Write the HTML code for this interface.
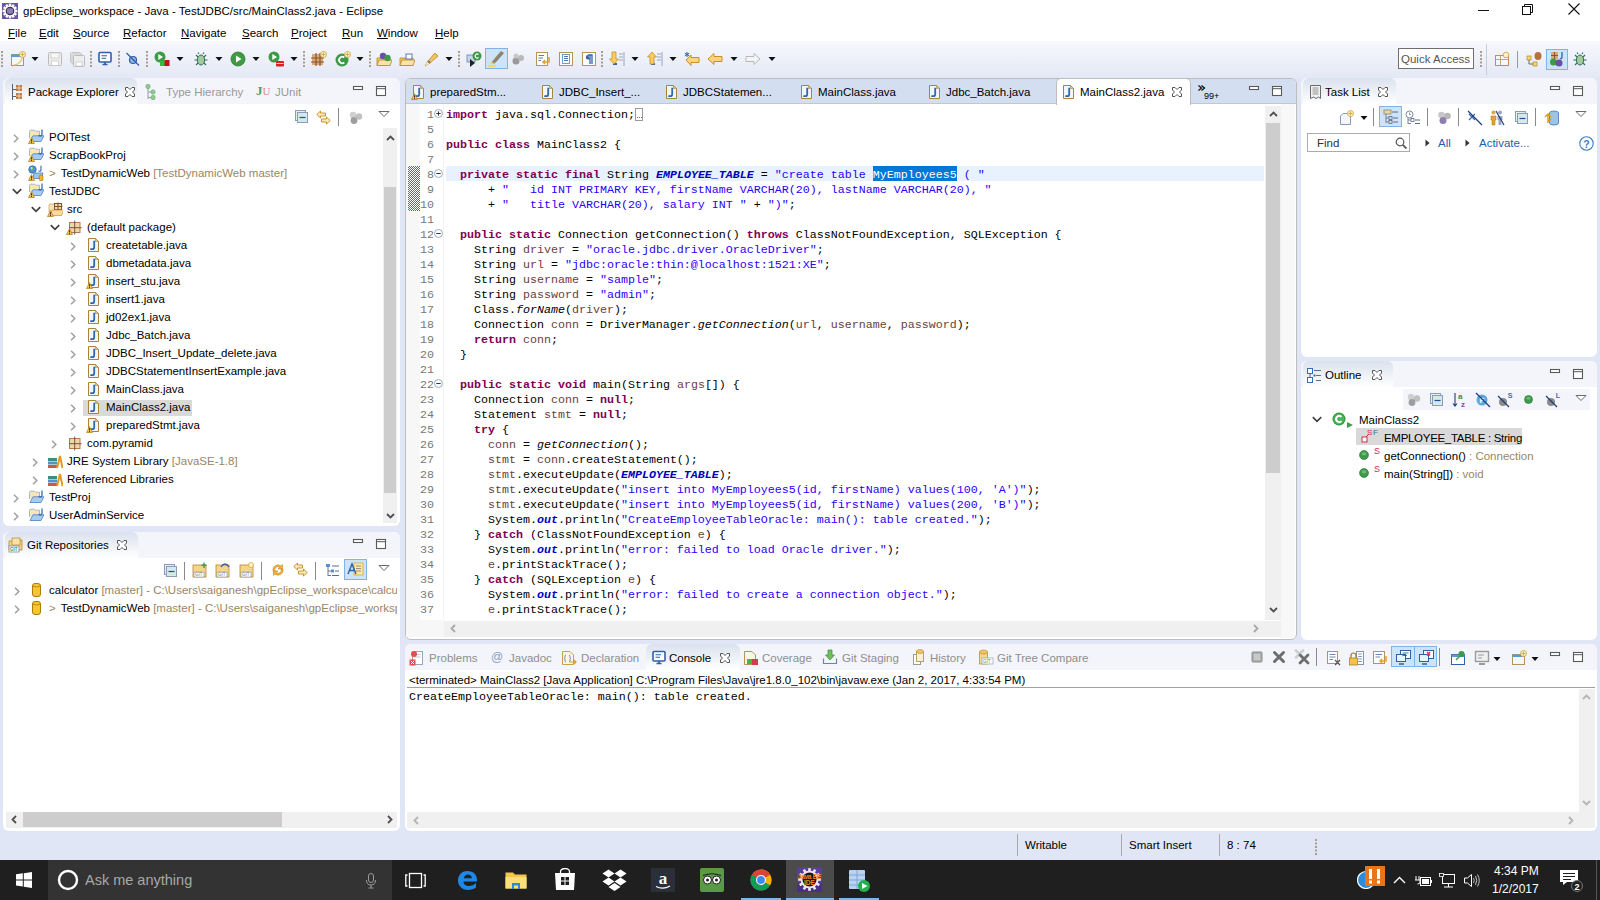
<!DOCTYPE html><html><head><meta charset="utf-8"><style>
*{box-sizing:border-box}
body{margin:0;width:1600px;height:900px;position:relative;overflow:hidden;background:#E1E6F6;font-family:"Liberation Sans",sans-serif;font-size:11.5px;color:#000}
.a{position:absolute}
.t{position:absolute;white-space:nowrap;line-height:14px}
.panel{position:absolute;background:#fff;border-radius:6px;overflow:hidden}
.hdr{position:absolute;left:0;right:0;top:0;height:26px;background:#F3F5FB}
.code{position:absolute;font-family:"Liberation Mono",monospace;font-size:11.67px;white-space:pre;line-height:15px;height:15px}
.k{color:#7F0055;font-weight:bold}
.s{color:#2A00FF}
.v{color:#6A3E3E}
.f{color:#0000C0;font-style:italic;font-weight:bold}
.i{font-style:italic}
.dec{color:#9A8662}
.g{color:#8A8A8A}
</style></head><body>
<div class="a" style="left:0;top:0;width:1600px;height:41px;background:#fff"></div>
<svg class="a" style="left:2px;top:3px" width="16" height="16" viewBox="0 0 16 16"><rect x="0" y="0" width="16" height="16" fill="#6B55A3"/><rect x="6.8" y="0.6" width="2.4" height="3" fill="#fff" transform="rotate(0 8 8)"/><rect x="6.8" y="0.6" width="2.4" height="3" fill="#fff" transform="rotate(30 8 8)"/><rect x="6.8" y="0.6" width="2.4" height="3" fill="#fff" transform="rotate(60 8 8)"/><rect x="6.8" y="0.6" width="2.4" height="3" fill="#fff" transform="rotate(90 8 8)"/><rect x="6.8" y="0.6" width="2.4" height="3" fill="#fff" transform="rotate(120 8 8)"/><rect x="6.8" y="0.6" width="2.4" height="3" fill="#fff" transform="rotate(150 8 8)"/><rect x="6.8" y="0.6" width="2.4" height="3" fill="#fff" transform="rotate(180 8 8)"/><rect x="6.8" y="0.6" width="2.4" height="3" fill="#fff" transform="rotate(210 8 8)"/><rect x="6.8" y="0.6" width="2.4" height="3" fill="#fff" transform="rotate(240 8 8)"/><rect x="6.8" y="0.6" width="2.4" height="3" fill="#fff" transform="rotate(270 8 8)"/><rect x="6.8" y="0.6" width="2.4" height="3" fill="#fff" transform="rotate(300 8 8)"/><rect x="6.8" y="0.6" width="2.4" height="3" fill="#fff" transform="rotate(330 8 8)"/><circle cx="8" cy="8" r="5.6" fill="#fff"/><circle cx="8" cy="8" r="4.3" fill="#1E1A30"/><circle cx="8" cy="8" r="3.4" fill="#7566A6"/><path d="M4.8 7 H11.2 M4.8 9 H11.2" stroke="#B9AEDD" stroke-width="0.7"/></svg>
<div class="t" style="left:23px;top:4px;">gpEclipse_workspace - Java - TestJDBC/src/MainClass2.java - Eclipse</div>
<div class="t" style="left:8px;top:26px;"><u>F</u>ile</div>
<div class="t" style="left:39px;top:26px;"><u>E</u>dit</div>
<div class="t" style="left:73px;top:26px;"><u>S</u>ource</div>
<div class="t" style="left:123px;top:26px;"><u>R</u>efactor</div>
<div class="t" style="left:181px;top:26px;"><u>N</u>avigate</div>
<div class="t" style="left:242px;top:26px;"><u>S</u>earch</div>
<div class="t" style="left:291px;top:26px;"><u>P</u>roject</div>
<div class="t" style="left:342px;top:26px;"><u>R</u>un</div>
<div class="t" style="left:377px;top:26px;"><u>W</u>indow</div>
<div class="t" style="left:435px;top:26px;"><u>H</u>elp</div>
<svg class="a" style="left:1478px;top:4px" width="12" height="12" viewBox="0 0 12 12"><path d="M0 6.5 H11" stroke="#111" stroke-width="1"/></svg>
<svg class="a" style="left:1522px;top:4px" width="12" height="12" viewBox="0 0 12 12"><rect x="0.5" y="2.5" width="8" height="8" fill="none" stroke="#111"/><path d="M2.5 2.5 V0.5 H10.5 V8.5 H8.5" fill="none" stroke="#111"/></svg>
<svg class="a" style="left:1568px;top:3px" width="12" height="12" viewBox="0 0 12 12"><path d="M0.5 0.5 L11.5 11.5 M11.5 0.5 L0.5 11.5" stroke="#111" stroke-width="1.1"/></svg>
<div class="a" style="left:0;top:41px;width:1600px;height:37px;background:linear-gradient(#F7F8FC,#E4E8F6)"></div>
<svg class="a" style="left:0px;top:50px" width="4" height="19" viewBox="0 0 4 19"><g fill="#A79F8A"><rect x="1" y="1.0" width="2" height="2"/><rect x="1" y="4.5" width="2" height="2"/><rect x="1" y="8.0" width="2" height="2"/><rect x="1" y="11.5" width="2" height="2"/><rect x="1" y="15.0" width="2" height="2"/></g></svg>
<svg class="a" style="left:10px;top:51px" width="16" height="16" viewBox="0 0 16 16"><rect x="1.5" y="3.5" width="12" height="11" fill="#F4F8FC" stroke="#B49459"/><rect x="1.5" y="3.5" width="12" height="2.5" fill="#5B9BD5"/><path d="M4 14 Q11 13 12 7" stroke="#E8C97A" stroke-width="1.5" fill="none"/><circle cx="12.5" cy="3.5" r="3" fill="#FFF3C4" stroke="#C8A040" stroke-width="0.8"/><path d="M12.5 1.5 V5.5 M10.5 3.5 H14.5" stroke="#C8A040" stroke-width="0.8"/></svg>
<svg class="a" style="left:31px;top:56px" width="8" height="6" viewBox="0 0 8 6"><path d="M0.5 1 H7.5 L4 5 Z" fill="#111"/></svg>
<svg class="a" style="left:47px;top:51px" width="16" height="16" viewBox="0 0 16 16"><rect x="1.5" y="1.5" width="13" height="13" rx="1" fill="#EDEDED" stroke="#BDBDBD"/><rect x="4" y="2" width="8" height="5" fill="#F8F8F8" stroke="#C8C8C8" stroke-width="0.7"/><rect x="4.5" y="10" width="7" height="4.5" fill="#fff" stroke="#C4C4C4" stroke-width="0.7"/></svg>
<svg class="a" style="left:69px;top:51px" width="16" height="16" viewBox="0 0 16 16"><rect x="1.5" y="1.5" width="10" height="10" rx="1" fill="#EDEDED" stroke="#C4C4C4"/><rect x="3" y="3" width="10" height="10" rx="1" fill="#EDEDED" stroke="#C4C4C4"/><rect x="4.5" y="4.5" width="11" height="11" rx="1" fill="#EDEDED" stroke="#BDBDBD"/><rect x="7" y="11" width="6" height="4" fill="#fff" stroke="#C4C4C4" stroke-width="0.7"/></svg>
<svg class="a" style="left:89px;top:50px" width="4" height="19" viewBox="0 0 4 19"><g fill="#A79F8A"><rect x="1" y="1.0" width="2" height="2"/><rect x="1" y="4.5" width="2" height="2"/><rect x="1" y="8.0" width="2" height="2"/><rect x="1" y="11.5" width="2" height="2"/><rect x="1" y="15.0" width="2" height="2"/></g></svg>
<svg class="a" style="left:98px;top:51px" width="16" height="16" viewBox="0 0 16 16"><rect x="1" y="1.5" width="12" height="9.5" rx="1" fill="#fff" stroke="#2F5FA8" stroke-width="1.6"/><path d="M3.5 4.8 H9 M3.5 7.3 H8" stroke="#2F5FA8" stroke-width="1.1"/><path d="M4.5 13.5 H9.5 M7 11 V13.5" stroke="#2F5FA8" stroke-width="1.6"/></svg>
<svg class="a" style="left:117px;top:50px" width="4" height="19" viewBox="0 0 4 19"><g fill="#A79F8A"><rect x="1" y="1.0" width="2" height="2"/><rect x="1" y="4.5" width="2" height="2"/><rect x="1" y="8.0" width="2" height="2"/><rect x="1" y="11.5" width="2" height="2"/><rect x="1" y="15.0" width="2" height="2"/></g></svg>
<svg class="a" style="left:125px;top:51px" width="16" height="16" viewBox="0 0 16 16"><circle cx="8" cy="9" r="3.5" fill="#8FB4E0" stroke="#2F5FA8" stroke-width="1.2"/><path d="M1.5 2 L14 14.5" stroke="#2F5FA8" stroke-width="1.2"/></svg>
<svg class="a" style="left:145px;top:50px" width="4" height="19" viewBox="0 0 4 19"><g fill="#A79F8A"><rect x="1" y="1.0" width="2" height="2"/><rect x="1" y="4.5" width="2" height="2"/><rect x="1" y="8.0" width="2" height="2"/><rect x="1" y="11.5" width="2" height="2"/><rect x="1" y="15.0" width="2" height="2"/></g></svg>
<svg class="a" style="left:154px;top:51px" width="16" height="16" viewBox="0 0 16 16"><circle cx="6" cy="6" r="5.5" fill="#3E9B45"/><path d="M4.3 3 L9 6 L4.3 9 Z" fill="#fff"/><rect x="6" y="10" width="5" height="5" fill="#2FBF3A"/><rect x="10.5" y="9" width="5" height="6" fill="#B81818"/></svg>
<svg class="a" style="left:176px;top:56px" width="8" height="6" viewBox="0 0 8 6"><path d="M0.5 1 H7.5 L4 5 Z" fill="#111"/></svg>
<svg class="a" style="left:193px;top:51px" width="16" height="16" viewBox="0 0 16 16"><g stroke="#2A6E5E" stroke-width="1.1" fill="none"><path d="M3 4 L5 6 M13 4 L11 6 M1.5 9 H4 M12 9 H14.5 M3 14 L5 12 M13 14 L11 12 M6 3 L5 1.5 M10 3 L11 1.5"/></g><ellipse cx="8" cy="9" rx="3.6" ry="5" fill="#A5C99A" stroke="#2A6E5E" stroke-width="1"/></svg>
<svg class="a" style="left:215px;top:56px" width="8" height="6" viewBox="0 0 8 6"><path d="M0.5 1 H7.5 L4 5 Z" fill="#111"/></svg>
<svg class="a" style="left:230px;top:51px" width="16" height="16" viewBox="0 0 16 16"><circle cx="8" cy="8" r="7" fill="#3E9B45" stroke="#2B7A33" stroke-width="0.8"/><path d="M6 4.5 L11.5 8 L6 11.5 Z" fill="#fff"/></svg>
<svg class="a" style="left:252px;top:56px" width="8" height="6" viewBox="0 0 8 6"><path d="M0.5 1 H7.5 L4 5 Z" fill="#111"/></svg>
<svg class="a" style="left:268px;top:51px" width="16" height="16" viewBox="0 0 16 16"><circle cx="6" cy="6" r="5.5" fill="#3E9B45"/><path d="M4.3 3 L9 6 L4.3 9 Z" fill="#fff"/><rect x="8" y="10" width="8" height="5.5" rx="1" fill="#D62222"/><path d="M8.5 12.5 H15.5" stroke="#fff" stroke-width="0.8"/></svg>
<svg class="a" style="left:290px;top:56px" width="8" height="6" viewBox="0 0 8 6"><path d="M0.5 1 H7.5 L4 5 Z" fill="#111"/></svg>
<svg class="a" style="left:302px;top:50px" width="4" height="19" viewBox="0 0 4 19"><g fill="#A79F8A"><rect x="1" y="1.0" width="2" height="2"/><rect x="1" y="4.5" width="2" height="2"/><rect x="1" y="8.0" width="2" height="2"/><rect x="1" y="11.5" width="2" height="2"/><rect x="1" y="15.0" width="2" height="2"/></g></svg>
<svg class="a" style="left:311px;top:51px" width="16" height="16" viewBox="0 0 16 16"><rect x="1" y="3" width="11" height="11" fill="#D9A878"/><g stroke="#8A5428" stroke-width="1.2"><path d="M5 2 V15 M9 2 V15 M0 7 H13 M0 11 H13"/></g><circle cx="12.5" cy="3.5" r="3" fill="#FFF3C4" stroke="#C8A040" stroke-width="0.8"/><path d="M12.5 1.5 V5.5 M10.5 3.5 H14.5" stroke="#C8A040" stroke-width="0.8"/></svg>
<svg class="a" style="left:335px;top:51px" width="16" height="16" viewBox="0 0 16 16"><circle cx="7" cy="9" r="6.5" fill="#3B9947"/><path d="M9.3 6.5 A3.2 3.2 0 1 0 9.3 11.5" stroke="#fff" stroke-width="1.8" fill="none"/><circle cx="12.5" cy="3.5" r="3" fill="#FFF3C4" stroke="#C8A040" stroke-width="0.8"/><path d="M12.5 1.5 V5.5 M10.5 3.5 H14.5" stroke="#C8A040" stroke-width="0.8"/></svg>
<svg class="a" style="left:356px;top:56px" width="8" height="6" viewBox="0 0 8 6"><path d="M0.5 1 H7.5 L4 5 Z" fill="#111"/></svg>
<svg class="a" style="left:368px;top:50px" width="4" height="19" viewBox="0 0 4 19"><g fill="#A79F8A"><rect x="1" y="1.0" width="2" height="2"/><rect x="1" y="4.5" width="2" height="2"/><rect x="1" y="8.0" width="2" height="2"/><rect x="1" y="11.5" width="2" height="2"/><rect x="1" y="15.0" width="2" height="2"/></g></svg>
<svg class="a" style="left:376px;top:51px" width="16" height="16" viewBox="0 0 16 16"><path d="M1 7 H14 V14.5 H1 Z" fill="#F0C674" stroke="#B8862E" stroke-width="0.8"/><path d="M1 14.5 L3 9 H16 L14 14.5 Z" fill="#FBE3A6" stroke="#B8862E" stroke-width="0.8"/><circle cx="7" cy="5" r="3.2" fill="#6A4FA8"/><circle cx="11.5" cy="7" r="3.2" fill="#3C9A48"/></svg>
<svg class="a" style="left:399px;top:51px" width="16" height="16" viewBox="0 0 16 16"><path d="M1 7 H14 V14.5 H1 Z" fill="#F0C674" stroke="#B8862E" stroke-width="0.8"/><path d="M1 14.5 L3 9 H16 L14 14.5 Z" fill="#FBE3A6" stroke="#B8862E" stroke-width="0.8"/><rect x="7" y="3" width="6" height="5" fill="#fff" stroke="#5A7FB0" stroke-width="1"/></svg>
<svg class="a" style="left:423px;top:51px" width="16" height="16" viewBox="0 0 16 16"><path d="M2 15 L5 10 L12 2 L15 5 L7 12 Z" fill="#F2C45A" stroke="#B8862E" stroke-width="0.8"/><path d="M2 15 L5 10 L7 12 Z" fill="#FFF6B0"/><path d="M5 10 L7 12" stroke="#777" stroke-width="2"/></svg>
<svg class="a" style="left:445px;top:56px" width="8" height="6" viewBox="0 0 8 6"><path d="M0.5 1 H7.5 L4 5 Z" fill="#111"/></svg>
<svg class="a" style="left:457px;top:50px" width="4" height="19" viewBox="0 0 4 19"><g fill="#A79F8A"><rect x="1" y="1.0" width="2" height="2"/><rect x="1" y="4.5" width="2" height="2"/><rect x="1" y="8.0" width="2" height="2"/><rect x="1" y="11.5" width="2" height="2"/><rect x="1" y="15.0" width="2" height="2"/></g></svg>
<svg class="a" style="left:466px;top:51px" width="16" height="16" viewBox="0 0 16 16"><rect x="1" y="4" width="8" height="7" fill="#C5D4E8" stroke="#6A86AE" stroke-width="0.8"/><circle cx="11" cy="5" r="4.5" fill="#3B9947"/><path d="M12.5 3.5 A2 2 0 1 0 12.5 6.5" stroke="#fff" stroke-width="1.2" fill="none"/><path d="M4 8 L4 16 L9 12 Z" fill="#222"/></svg>
<div class="a" style="left:485px;top:48px;width:23px;height:21px;background:#CDE3F8;border:1px solid #7EB4EA"></div>
<svg class="a" style="left:488px;top:50px" width="17" height="17" viewBox="0 0 17 17"><path d="M3 13 L7 8 L13 1 L16 3 L10 10 L6 14 Z" fill="#8D8370"/><path d="M2 15 L3 12 L7 13 Z" fill="#F5D54B"/><path d="M0 16 H8" stroke="#F5D54B" stroke-width="1.5"/></svg>
<svg class="a" style="left:511px;top:51px" width="16" height="16" viewBox="0 0 16 16"><circle cx="5" cy="10" r="3.5" fill="#9A9A9A"/><circle cx="10" cy="7" r="3" fill="#B8B8B8"/><circle cx="5" cy="5" r="2.5" fill="#C8C8C8"/></svg>
<svg class="a" style="left:535px;top:51px" width="16" height="16" viewBox="0 0 16 16"><rect x="1.5" y="1.5" width="11" height="13" fill="#fff" stroke="#B49459"/><path d="M3.5 4.5 H9 M3.5 7 H8 M3.5 9.5 H6" stroke="#5A7FB0"/><path d="M14 6 V11 H8 M10 9 L8 11 L10 13" stroke="#E2A42A" stroke-width="1.6" fill="none"/></svg>
<svg class="a" style="left:558px;top:51px" width="16" height="16" viewBox="0 0 16 16"><rect x="1.5" y="1.5" width="13" height="13" fill="#fff" stroke="#B49459"/><rect x="4.5" y="3.5" width="7" height="9" fill="#fff" stroke="#5A7FB0" stroke-width="0.8"/><path d="M6 5.5 H10 M6 7.5 H10 M6 9.5 H10" stroke="#3463A9" stroke-width="0.9"/></svg>
<svg class="a" style="left:581px;top:51px" width="16" height="16" viewBox="0 0 16 16"><rect x="1.5" y="1.5" width="13" height="13" fill="#fff" stroke="#B49459"/><path d="M7 4 H11 V13 M9 4 V13" stroke="#3463A9" stroke-width="1.3" fill="none"/><path d="M7 4 A2.2 2.2 0 0 0 7 8.4 H9" fill="#3463A9"/></svg>
<svg class="a" style="left:600px;top:50px" width="4" height="19" viewBox="0 0 4 19"><g fill="#A79F8A"><rect x="1" y="1.0" width="2" height="2"/><rect x="1" y="4.5" width="2" height="2"/><rect x="1" y="8.0" width="2" height="2"/><rect x="1" y="11.5" width="2" height="2"/><rect x="1" y="15.0" width="2" height="2"/></g></svg>
<svg class="a" style="left:609px;top:51px" width="16" height="16" viewBox="0 0 16 16"><g stroke="#7E97B8" stroke-width="0.8"><path d="M10 3 H14 M10 6 H14 M10 9 H14 M15 1 V15"/></g><rect x="4" y="12" width="4" height="2" fill="#3463A9"/><path d="M5 13 L9.5 8 H7 V1 H3 V8 H0.5 Z" fill="#F8CF5E" stroke="#C8902A" stroke-width="0.8"/></svg>
<svg class="a" style="left:631px;top:56px" width="8" height="6" viewBox="0 0 8 6"><path d="M0.5 1 H7.5 L4 5 Z" fill="#111"/></svg>
<svg class="a" style="left:647px;top:51px" width="16" height="16" viewBox="0 0 16 16"><g stroke="#7E97B8" stroke-width="0.8"><path d="M10 3 H14 M10 6 H14 M10 9 H14 M15 1 V15"/></g><rect x="4" y="12" width="4" height="2" fill="#3463A9"/><path d="M5 1 L9.5 6 H7 V13 H3 V6 H0.5 Z" fill="#F8CF5E" stroke="#C8902A" stroke-width="0.8"/></svg>
<svg class="a" style="left:669px;top:56px" width="8" height="6" viewBox="0 0 8 6"><path d="M0.5 1 H7.5 L4 5 Z" fill="#111"/></svg>
<svg class="a" style="left:684px;top:51px" width="16" height="16" viewBox="0 0 16 16"><path d="M3 1 V6 M0.8 2.2 L5.2 4.8 M0.8 4.8 L5.2 2.2" stroke="#2F5FA8" stroke-width="1"/><path d="M2 9 L7 4 V6.5 H15 V11.5 H7 V14.5 Z" fill="#F8D57A" stroke="#C8902A" stroke-width="1"/></svg>
<svg class="a" style="left:707px;top:51px" width="16" height="16" viewBox="0 0 16 16"><path d="M1 8 L7 2.5 V5.5 H15 V10.5 H7 V13.5 Z" fill="#F8D57A" stroke="#C8902A" stroke-width="1"/></svg>
<svg class="a" style="left:730px;top:56px" width="8" height="6" viewBox="0 0 8 6"><path d="M0.5 1 H7.5 L4 5 Z" fill="#111"/></svg>
<svg class="a" style="left:745px;top:51px" width="16" height="16" viewBox="0 0 16 16"><path d="M15 8 L9 2.5 V5.5 H1 V10.5 H9 V13.5 Z" fill="#F4F4F4" stroke="#B8B8B8" stroke-width="1"/></svg>
<svg class="a" style="left:768px;top:56px" width="8" height="6" viewBox="0 0 8 6"><path d="M0.5 1 H7.5 L4 5 Z" fill="#111"/></svg>
<div class="a" style="left:1398px;top:48px;width:76px;height:21px;border:1px solid #6E6E6E;background:#fff"></div>
<div class="t" style="left:1401px;top:52px;color:#555">Quick Access</div>
<svg class="a" style="left:1479px;top:50px" width="4" height="19" viewBox="0 0 4 19"><g fill="#A79F8A"><rect x="1" y="1.0" width="2" height="2"/><rect x="1" y="4.5" width="2" height="2"/><rect x="1" y="8.0" width="2" height="2"/><rect x="1" y="11.5" width="2" height="2"/><rect x="1" y="15.0" width="2" height="2"/></g></svg>
<div class="a" style="left:1486px;top:44px;width:1px;height:31px;background:#C8CCD8"></div>
<svg class="a" style="left:1494px;top:51px" width="16" height="16" viewBox="0 0 16 16"><rect x="1.5" y="4.5" width="13" height="10" fill="#F4F8FC" stroke="#B49459"/><path d="M1.5 8.5 H14.5 M6.5 4.5 V14.5" stroke="#B49459" stroke-width="0.8"/><circle cx="12" cy="4" r="2.8" fill="#FFF3C4" stroke="#C8A040" stroke-width="0.8"/></svg>
<div class="a" style="left:1517px;top:51px;width:1px;height:17px;background:#9A9A9A"></div>
<svg class="a" style="left:1526px;top:51px" width="16" height="16" viewBox="0 0 16 16"><rect x="1" y="5" width="4" height="4" fill="#F5D56A" stroke="#B8862E" stroke-width="0.7"/><rect x="7" y="11" width="4" height="4" fill="#F5D56A" stroke="#B8862E" stroke-width="0.7"/><path d="M3 9 V13 H7" stroke="#666" fill="none"/><ellipse cx="12" cy="5" rx="3.5" ry="4" fill="#B8713A"/></svg>
<div class="a" style="left:1546px;top:49px;width:22px;height:21px;background:#CDE3F8;border:1px solid #7EB4EA"></div>
<svg class="a" style="left:1549px;top:51px" width="16" height="16" viewBox="0 0 16 16"><rect x="2" y="1" width="7" height="7" fill="#D9A878"/><path d="M5.5 1 V8 M2 4.5 H9" stroke="#8A5428"/><circle cx="4.5" cy="11" r="3.5" fill="#3C9A48"/><circle cx="10" cy="12" r="3.5" fill="#6A4FA8"/><path d="M13 1 V6 Q13 8 11 7.5" stroke="#3463A9" stroke-width="1.3" fill="none"/></svg>
<svg class="a" style="left:1572px;top:51px" width="16" height="16" viewBox="0 0 16 16"><g stroke="#2A6E5E" stroke-width="1.1" fill="none"><path d="M3 4 L5 6 M13 4 L11 6 M1.5 9 H4 M12 9 H14.5 M3 14 L5 12 M13 14 L11 12 M6 3 L5 1.5 M10 3 L11 1.5"/></g><ellipse cx="8" cy="9" rx="3.6" ry="5" fill="#A5C99A" stroke="#2A6E5E" stroke-width="1"/></svg>
<div class="panel" style="left:3px;top:78px;width:397px;height:448px">
<div class="hdr"></div>
<div class="a" style="left:2px;top:0;width:132px;height:26px;border-radius:6px 6px 0 0;background:linear-gradient(#DAE2ED,#fff)"></div>
</div>
<svg class="a" style="left:11px;top:84px" width="16" height="16" viewBox="0 0 16 16"><path d="M1.5 0 V16 M1.5 5.5 H5 M1.5 12.5 H5" stroke="#56607A" stroke-width="1"/><g fill="#C07A43"><rect x="5" y="1" width="6" height="6"/><rect x="5" y="9" width="6" height="6"/></g><g stroke="#F3E2CF" stroke-width="0.8"><path d="M8 1 V7 M5 4 H11 M8 9 V15 M5 12 H11"/></g></svg>
<div class="t" style="left:28px;top:85px;">Package Explorer</div>
<svg class="a" style="left:145px;top:84px" width="16" height="16" viewBox="0 0 16 16"><path d="M3 3 V15 M3 8 H7 M3 13.5 H7" stroke="#9A9AAE" stroke-width="1"/><g fill="#8FCB8F" stroke="#6BAA6B" stroke-width="0.6"><circle cx="3" cy="2.5" r="2.2"/><circle cx="8" cy="8" r="2.2"/><circle cx="8" cy="13.5" r="2.2"/></g></svg>
<div class="t" style="left:256px;top:84px;font-family:Liberation Serif;font-size:13px;font-weight:bold;color:#4E9E5E">J<span style="color:#E08A8A;font-size:11px;font-weight:normal">U</span></div>
<svg class="a" style="left:295px;top:110px" width="14" height="14" viewBox="0 0 14 14"><rect x="0.5" y="0.5" width="10" height="10" fill="#E3EEF3" stroke="#8E9BB5"/><rect x="2.5" y="2.5" width="10" height="10" fill="#D5E9EC" stroke="#8E9BB5"/><path d="M4.5 7.5 H10.5" stroke="#1F4F9A" stroke-width="1.2"/></svg>
<svg class="a" style="left:316px;top:110px" width="15" height="15" viewBox="0 0 15 15"><path d="M0.8 4.5 L4.5 1 V3 H9.5 V6 H4.5 V8 Z" fill="#FCEBB8" stroke="#C48A22" stroke-width="0.9"/><path d="M14.2 10.5 L10.5 7 V9 H5.5 V12 H10.5 V14 Z" fill="#FCEBB8" stroke="#C48A22" stroke-width="0.9"/></svg>
<div class="a" style="left:338px;top:108px;width:1px;height:18px;background:#8A8A8A"></div>
<svg class="a" style="left:349px;top:111px" width="14" height="14" viewBox="0 0 14 14"><circle cx="4" cy="4" r="3.2" fill="#CFCFCF"/><circle cx="10" cy="5.5" r="3.2" fill="#C0C0C0"/><circle cx="5" cy="9.5" r="3.4" fill="#9E9E9E"/></svg>
<svg class="a" style="left:378px;top:109px" width="12" height="9" viewBox="0 0 12 9"><path d="M1 2.5 H11 L6 7.5 Z" fill="#fff" stroke="#6A6A6A" stroke-width="1"/></svg>
<svg class="a" style="left:125px;top:87px" width="10" height="10" viewBox="0 0 10 10"><path d="M0.5 0.5 H3 L5 2.5 L7 0.5 H9.5 V3 L7.5 5 L9.5 7 V9.5 H7 L5 7.5 L3 9.5 H0.5 V7 L2.5 5 L0.5 3 Z" fill="#fff" stroke="#555" stroke-width="1"/></svg>
<div class="t" style="left:166px;top:85px;color:#999">Type Hierarchy</div>
<div class="t" style="left:275px;top:85px;color:#999">JUnit</div>
<svg class="a" style="left:352px;top:85px" width="12" height="12" viewBox="0 0 12 12"><rect x="1.5" y="1.5" width="9" height="3" fill="#fff" stroke="#5A5A5A" stroke-width="1.1"/></svg><svg class="a" style="left:375px;top:85px" width="13" height="13" viewBox="0 0 13 13"><rect x="1.5" y="1.5" width="9" height="9" fill="#fff" stroke="#5A5A5A" stroke-width="1.1"/><path d="M1.5 3.7 H10.5" stroke="#5A5A5A" stroke-width="1"/></svg>
<svg class="a" style="left:12px;top:133px" width="8" height="11" viewBox="0 0 8 11"><path d="M2 1.8 L5.8 5.5 L2 9.2" fill="none" stroke="#A3A3A3" stroke-width="1.6"/></svg>
<svg class="a" style="left:28px;top:129px" width="16" height="16" viewBox="0 0 16 16"><path d="M1.5 9 V2.5 Q1.5 1.2 2.8 1.2 H6.5 L7.5 2.2 H11.5 V9" fill="#F8E6B8" stroke="#9FB0C8" stroke-width="0.9"/><path d="M2 12.5 L5 6.8 H16 L13 12.5 Z" fill="#A8CBF0" stroke="#5A8AC8" stroke-width="0.9"/><path d="M14 0.5 V5 Q14 7 12 7 Q11 7 10.6 6" fill="none" stroke="#3A6FB0" stroke-width="1.3"/><path d="M0.5 14.5 L3.5 8.5 L6.5 14.5 Z" fill="#F4C24B" stroke="#B8862E" stroke-width="0.8"/><rect x="3.1" y="10.3" width="0.9" height="2.2" fill="#222"/><rect x="3.1" y="13" width="0.9" height="0.9" fill="#222"/></svg>
<div class="t" style="left:49px;top:130px;">POITest</div>
<svg class="a" style="left:12px;top:151px" width="8" height="11" viewBox="0 0 8 11"><path d="M2 1.8 L5.8 5.5 L2 9.2" fill="none" stroke="#A3A3A3" stroke-width="1.6"/></svg>
<svg class="a" style="left:28px;top:147px" width="16" height="16" viewBox="0 0 16 16"><path d="M1.5 9 V2.5 Q1.5 1.2 2.8 1.2 H6.5 L7.5 2.2 H11.5 V9" fill="#F8E6B8" stroke="#9FB0C8" stroke-width="0.9"/><path d="M2 12.5 L5 6.8 H16 L13 12.5 Z" fill="#A8CBF0" stroke="#5A8AC8" stroke-width="0.9"/><path d="M14 0.5 V5 Q14 7 12 7 Q11 7 10.6 6" fill="none" stroke="#3A6FB0" stroke-width="1.3"/><path d="M0.5 14.5 L3.5 8.5 L6.5 14.5 Z" fill="#F4C24B" stroke="#B8862E" stroke-width="0.8"/><rect x="3.1" y="10.3" width="0.9" height="2.2" fill="#222"/><rect x="3.1" y="13" width="0.9" height="0.9" fill="#222"/></svg>
<div class="t" style="left:49px;top:148px;">ScrapBookProj</div>
<svg class="a" style="left:12px;top:169px" width="8" height="11" viewBox="0 0 8 11"><path d="M2 1.8 L5.8 5.5 L2 9.2" fill="none" stroke="#A3A3A3" stroke-width="1.6"/></svg>
<svg class="a" style="left:28px;top:165px" width="16" height="16" viewBox="0 0 16 16"><circle cx="4.5" cy="4.5" r="3.8" fill="#4A90D9" stroke="#2F5F9E" stroke-width="0.6"/><path d="M3 2.5 Q5 2 5.5 4 Q4.5 6 3 5 Z" fill="#7DBF4A"/><circle cx="3.5" cy="3" r="1" fill="#E8F4FF" opacity="0.7"/><path d="M6 8 H15 L13.5 13.5 H5 Z" fill="#9CC3E8" stroke="#5C8CC2" stroke-width="0.9"/><path d="M13 0.8 V5 Q13 6.3 11.8 6.3 Q10.8 6.3 10.6 5.6" fill="none" stroke="#3463A9" stroke-width="1.1"/><rect x="11.3" y="10.3" width="3.6" height="5.2" rx="1" fill="#F5B91F" stroke="#A9760E" stroke-width="0.7"/><path d="M0.5 15.5 L3.5 9.5 L6.5 15.5 Z" fill="#F4C24B" stroke="#B8862E" stroke-width="0.8"/><rect x="3.1" y="11.3" width="0.9" height="2.2" fill="#222"/><rect x="3.1" y="14" width="0.9" height="0.9" fill="#222"/></svg>
<div class="t" style="left:49px;top:166px;"><span style="color:#9A8662;margin-right:2px">&gt;</span> TestDynamicWeb<span class="dec"> [TestDynamicWeb master]</span></div>
<svg class="a" style="left:12px;top:187px" width="10" height="9" viewBox="0 0 10 9"><path d="M0.8 2.2 L5 6.4 L9.2 2.2" fill="none" stroke="#404040" stroke-width="1.7"/></svg>
<svg class="a" style="left:28px;top:183px" width="16" height="16" viewBox="0 0 16 16"><path d="M1.5 9 V2.5 Q1.5 1.2 2.8 1.2 H6.5 L7.5 2.2 H11.5 V9" fill="#F8E6B8" stroke="#9FB0C8" stroke-width="0.9"/><path d="M2 12.5 L5 6.8 H16 L13 12.5 Z" fill="#A8CBF0" stroke="#5A8AC8" stroke-width="0.9"/><path d="M14 0.5 V5 Q14 7 12 7 Q11 7 10.6 6" fill="none" stroke="#3A6FB0" stroke-width="1.3"/><path d="M0.5 14.5 L3.5 8.5 L6.5 14.5 Z" fill="#F4C24B" stroke="#B8862E" stroke-width="0.8"/><rect x="3.1" y="10.3" width="0.9" height="2.2" fill="#222"/><rect x="3.1" y="13" width="0.9" height="0.9" fill="#222"/></svg>
<div class="t" style="left:49px;top:184px;">TestJDBC</div>
<svg class="a" style="left:31px;top:205px" width="10" height="9" viewBox="0 0 10 9"><path d="M0.8 2.2 L5 6.4 L9.2 2.2" fill="none" stroke="#404040" stroke-width="1.7"/></svg>
<svg class="a" style="left:47px;top:201px" width="16" height="16" viewBox="0 0 16 16"><path d="M2 4 Q2 3 3 3 H9 V11 H2 Z" fill="#F6E4B8" stroke="#D8A860" stroke-width="0.8"/><rect x="7.5" y="2.5" width="7" height="6" fill="#F2D9A0" stroke="#7A5238" stroke-width="1"/><path d="M11 1.5 V9 M7 5.5 H15.5" stroke="#7A5238" stroke-width="1"/><path d="M3 14.5 L5 9 H17 L14.5 14.5 Z" fill="#F8DC98" stroke="#D09A48" stroke-width="0.8"/><path d="M0.5 15.5 L3.5 9.5 L6.5 15.5 Z" fill="#F4C24B" stroke="#B8862E" stroke-width="0.8"/><rect x="3.1" y="11.3" width="0.9" height="2.2" fill="#222"/><rect x="3.1" y="14" width="0.9" height="0.9" fill="#222"/></svg>
<div class="t" style="left:67px;top:202px;">src</div>
<svg class="a" style="left:50px;top:223px" width="10" height="9" viewBox="0 0 10 9"><path d="M0.8 2.2 L5 6.4 L9.2 2.2" fill="none" stroke="#404040" stroke-width="1.7"/></svg>
<svg class="a" style="left:66px;top:219px" width="16" height="16" viewBox="0 0 16 16"><rect x="3.5" y="3.5" width="10.5" height="10" fill="#EED6A8" stroke="#B07A50" stroke-width="1"/><path d="M8.7 1.5 V15.5 M3 8.7 H15.5" stroke="#7A5238" stroke-width="1"/><path d="M0.5 15.5 L3.5 9.5 L6.5 15.5 Z" fill="#F4C24B" stroke="#B8862E" stroke-width="0.8"/><rect x="3.1" y="11.3" width="0.9" height="2.2" fill="#222"/><rect x="3.1" y="14" width="0.9" height="0.9" fill="#222"/></svg>
<div class="t" style="left:87px;top:220px;">(default package)</div>
<svg class="a" style="left:69px;top:241px" width="8" height="11" viewBox="0 0 8 11"><path d="M2 1.8 L5.8 5.5 L2 9.2" fill="none" stroke="#A3A3A3" stroke-width="1.6"/></svg>
<svg class="a" style="left:86px;top:237px" width="16" height="16" viewBox="0 0 16 16"><path d="M2.5 1.5 H9.5 L12.5 4.5 V14.5 H2.5 Z" fill="#F2F6FB" stroke="#A88439" stroke-width="1"/><path d="M9.5 1.5 V4.5 H12.5 Z" fill="#E2C98A" stroke="#A88439" stroke-width="0.6"/><path d="M8.2 3.8 V10.2 Q8.2 12.2 6.2 12.2 Q5 12.2 4.4 11.6" fill="none" stroke="#3269A8" stroke-width="1.8"/></svg>
<div class="t" style="left:106px;top:238px;">createtable.java</div>
<svg class="a" style="left:69px;top:259px" width="8" height="11" viewBox="0 0 8 11"><path d="M2 1.8 L5.8 5.5 L2 9.2" fill="none" stroke="#A3A3A3" stroke-width="1.6"/></svg>
<svg class="a" style="left:86px;top:255px" width="16" height="16" viewBox="0 0 16 16"><path d="M2.5 1.5 H9.5 L12.5 4.5 V14.5 H2.5 Z" fill="#F2F6FB" stroke="#A88439" stroke-width="1"/><path d="M9.5 1.5 V4.5 H12.5 Z" fill="#E2C98A" stroke="#A88439" stroke-width="0.6"/><path d="M8.2 3.8 V10.2 Q8.2 12.2 6.2 12.2 Q5 12.2 4.4 11.6" fill="none" stroke="#3269A8" stroke-width="1.8"/></svg>
<div class="t" style="left:106px;top:256px;">dbmetadata.java</div>
<svg class="a" style="left:69px;top:277px" width="8" height="11" viewBox="0 0 8 11"><path d="M2 1.8 L5.8 5.5 L2 9.2" fill="none" stroke="#A3A3A3" stroke-width="1.6"/></svg>
<svg class="a" style="left:86px;top:273px" width="16" height="16" viewBox="0 0 16 16"><path d="M2.5 1.5 H9.5 L12.5 4.5 V14.5 H2.5 Z" fill="#F2F6FB" stroke="#A88439" stroke-width="1"/><path d="M9.5 1.5 V4.5 H12.5 Z" fill="#E2C98A" stroke="#A88439" stroke-width="0.6"/><path d="M8.2 3.8 V10.2 Q8.2 12.2 6.2 12.2 Q5 12.2 4.4 11.6" fill="none" stroke="#3269A8" stroke-width="1.8"/><path d="M0.5 15.5 L3.5 9.5 L6.5 15.5 Z" fill="#F4C24B" stroke="#B8862E" stroke-width="0.8"/><rect x="3.1" y="11.3" width="0.9" height="2.2" fill="#222"/><rect x="3.1" y="14" width="0.9" height="0.9" fill="#222"/></svg>
<div class="t" style="left:106px;top:274px;">insert_stu.java</div>
<svg class="a" style="left:69px;top:295px" width="8" height="11" viewBox="0 0 8 11"><path d="M2 1.8 L5.8 5.5 L2 9.2" fill="none" stroke="#A3A3A3" stroke-width="1.6"/></svg>
<svg class="a" style="left:86px;top:291px" width="16" height="16" viewBox="0 0 16 16"><path d="M2.5 1.5 H9.5 L12.5 4.5 V14.5 H2.5 Z" fill="#F2F6FB" stroke="#A88439" stroke-width="1"/><path d="M9.5 1.5 V4.5 H12.5 Z" fill="#E2C98A" stroke="#A88439" stroke-width="0.6"/><path d="M8.2 3.8 V10.2 Q8.2 12.2 6.2 12.2 Q5 12.2 4.4 11.6" fill="none" stroke="#3269A8" stroke-width="1.8"/></svg>
<div class="t" style="left:106px;top:292px;">insert1.java</div>
<svg class="a" style="left:69px;top:313px" width="8" height="11" viewBox="0 0 8 11"><path d="M2 1.8 L5.8 5.5 L2 9.2" fill="none" stroke="#A3A3A3" stroke-width="1.6"/></svg>
<svg class="a" style="left:86px;top:309px" width="16" height="16" viewBox="0 0 16 16"><path d="M2.5 1.5 H9.5 L12.5 4.5 V14.5 H2.5 Z" fill="#F2F6FB" stroke="#A88439" stroke-width="1"/><path d="M9.5 1.5 V4.5 H12.5 Z" fill="#E2C98A" stroke="#A88439" stroke-width="0.6"/><path d="M8.2 3.8 V10.2 Q8.2 12.2 6.2 12.2 Q5 12.2 4.4 11.6" fill="none" stroke="#3269A8" stroke-width="1.8"/></svg>
<div class="t" style="left:106px;top:310px;">jd02ex1.java</div>
<svg class="a" style="left:69px;top:331px" width="8" height="11" viewBox="0 0 8 11"><path d="M2 1.8 L5.8 5.5 L2 9.2" fill="none" stroke="#A3A3A3" stroke-width="1.6"/></svg>
<svg class="a" style="left:86px;top:327px" width="16" height="16" viewBox="0 0 16 16"><path d="M2.5 1.5 H9.5 L12.5 4.5 V14.5 H2.5 Z" fill="#F2F6FB" stroke="#A88439" stroke-width="1"/><path d="M9.5 1.5 V4.5 H12.5 Z" fill="#E2C98A" stroke="#A88439" stroke-width="0.6"/><path d="M8.2 3.8 V10.2 Q8.2 12.2 6.2 12.2 Q5 12.2 4.4 11.6" fill="none" stroke="#3269A8" stroke-width="1.8"/></svg>
<div class="t" style="left:106px;top:328px;">Jdbc_Batch.java</div>
<svg class="a" style="left:69px;top:349px" width="8" height="11" viewBox="0 0 8 11"><path d="M2 1.8 L5.8 5.5 L2 9.2" fill="none" stroke="#A3A3A3" stroke-width="1.6"/></svg>
<svg class="a" style="left:86px;top:345px" width="16" height="16" viewBox="0 0 16 16"><path d="M2.5 1.5 H9.5 L12.5 4.5 V14.5 H2.5 Z" fill="#F2F6FB" stroke="#A88439" stroke-width="1"/><path d="M9.5 1.5 V4.5 H12.5 Z" fill="#E2C98A" stroke="#A88439" stroke-width="0.6"/><path d="M8.2 3.8 V10.2 Q8.2 12.2 6.2 12.2 Q5 12.2 4.4 11.6" fill="none" stroke="#3269A8" stroke-width="1.8"/></svg>
<div class="t" style="left:106px;top:346px;">JDBC_Insert_Update_delete.java</div>
<svg class="a" style="left:69px;top:367px" width="8" height="11" viewBox="0 0 8 11"><path d="M2 1.8 L5.8 5.5 L2 9.2" fill="none" stroke="#A3A3A3" stroke-width="1.6"/></svg>
<svg class="a" style="left:86px;top:363px" width="16" height="16" viewBox="0 0 16 16"><path d="M2.5 1.5 H9.5 L12.5 4.5 V14.5 H2.5 Z" fill="#F2F6FB" stroke="#A88439" stroke-width="1"/><path d="M9.5 1.5 V4.5 H12.5 Z" fill="#E2C98A" stroke="#A88439" stroke-width="0.6"/><path d="M8.2 3.8 V10.2 Q8.2 12.2 6.2 12.2 Q5 12.2 4.4 11.6" fill="none" stroke="#3269A8" stroke-width="1.8"/></svg>
<div class="t" style="left:106px;top:364px;">JDBCStatementInsertExample.java</div>
<svg class="a" style="left:69px;top:385px" width="8" height="11" viewBox="0 0 8 11"><path d="M2 1.8 L5.8 5.5 L2 9.2" fill="none" stroke="#A3A3A3" stroke-width="1.6"/></svg>
<svg class="a" style="left:86px;top:381px" width="16" height="16" viewBox="0 0 16 16"><path d="M2.5 1.5 H9.5 L12.5 4.5 V14.5 H2.5 Z" fill="#F2F6FB" stroke="#A88439" stroke-width="1"/><path d="M9.5 1.5 V4.5 H12.5 Z" fill="#E2C98A" stroke="#A88439" stroke-width="0.6"/><path d="M8.2 3.8 V10.2 Q8.2 12.2 6.2 12.2 Q5 12.2 4.4 11.6" fill="none" stroke="#3269A8" stroke-width="1.8"/></svg>
<div class="t" style="left:106px;top:382px;">MainClass.java</div>
<div class="a" style="left:83px;top:400px;width:109px;height:16px;background:#D9D9D9"></div>
<svg class="a" style="left:69px;top:403px" width="8" height="11" viewBox="0 0 8 11"><path d="M2 1.8 L5.8 5.5 L2 9.2" fill="none" stroke="#A3A3A3" stroke-width="1.6"/></svg>
<svg class="a" style="left:86px;top:399px" width="16" height="16" viewBox="0 0 16 16"><path d="M2.5 1.5 H9.5 L12.5 4.5 V14.5 H2.5 Z" fill="#F2F6FB" stroke="#A88439" stroke-width="1"/><path d="M9.5 1.5 V4.5 H12.5 Z" fill="#E2C98A" stroke="#A88439" stroke-width="0.6"/><path d="M8.2 3.8 V10.2 Q8.2 12.2 6.2 12.2 Q5 12.2 4.4 11.6" fill="none" stroke="#3269A8" stroke-width="1.8"/></svg>
<div class="t" style="left:106px;top:400px;">MainClass2.java</div>
<svg class="a" style="left:69px;top:421px" width="8" height="11" viewBox="0 0 8 11"><path d="M2 1.8 L5.8 5.5 L2 9.2" fill="none" stroke="#A3A3A3" stroke-width="1.6"/></svg>
<svg class="a" style="left:86px;top:417px" width="16" height="16" viewBox="0 0 16 16"><path d="M2.5 1.5 H9.5 L12.5 4.5 V14.5 H2.5 Z" fill="#F2F6FB" stroke="#A88439" stroke-width="1"/><path d="M9.5 1.5 V4.5 H12.5 Z" fill="#E2C98A" stroke="#A88439" stroke-width="0.6"/><path d="M8.2 3.8 V10.2 Q8.2 12.2 6.2 12.2 Q5 12.2 4.4 11.6" fill="none" stroke="#3269A8" stroke-width="1.8"/><path d="M0.5 15.5 L3.5 9.5 L6.5 15.5 Z" fill="#F4C24B" stroke="#B8862E" stroke-width="0.8"/><rect x="3.1" y="11.3" width="0.9" height="2.2" fill="#222"/><rect x="3.1" y="14" width="0.9" height="0.9" fill="#222"/></svg>
<div class="t" style="left:106px;top:418px;">preparedStmt.java</div>
<svg class="a" style="left:50px;top:439px" width="8" height="11" viewBox="0 0 8 11"><path d="M2 1.8 L5.8 5.5 L2 9.2" fill="none" stroke="#A3A3A3" stroke-width="1.6"/></svg>
<svg class="a" style="left:66px;top:435px" width="16" height="16" viewBox="0 0 16 16"><rect x="3.5" y="3.5" width="10.5" height="10" fill="#EED6A8" stroke="#B07A50" stroke-width="1"/><path d="M8.7 1.5 V15.5 M3 8.7 H15.5" stroke="#7A5238" stroke-width="1"/></svg>
<div class="t" style="left:87px;top:436px;">com.pyramid</div>
<svg class="a" style="left:31px;top:457px" width="8" height="11" viewBox="0 0 8 11"><path d="M2 1.8 L5.8 5.5 L2 9.2" fill="none" stroke="#A3A3A3" stroke-width="1.6"/></svg>
<svg class="a" style="left:47px;top:453px" width="16" height="16" viewBox="0 0 16 16"><rect x="1" y="5" width="9" height="3" fill="#3C8F7C"/><rect x="1" y="8.5" width="9" height="3" fill="#5B8DC9"/><rect x="1" y="12" width="9" height="3" fill="#C0603A"/><path d="M10 15 L13 3 L15.5 15" fill="none" stroke="#E29A1E" stroke-width="2"/></svg>
<div class="t" style="left:67px;top:454px;">JRE System Library<span class="dec"> [JavaSE-1.8]</span></div>
<svg class="a" style="left:31px;top:475px" width="8" height="11" viewBox="0 0 8 11"><path d="M2 1.8 L5.8 5.5 L2 9.2" fill="none" stroke="#A3A3A3" stroke-width="1.6"/></svg>
<svg class="a" style="left:47px;top:471px" width="16" height="16" viewBox="0 0 16 16"><rect x="1" y="5" width="9" height="3" fill="#3C8F7C"/><rect x="1" y="8.5" width="9" height="3" fill="#5B8DC9"/><rect x="1" y="12" width="9" height="3" fill="#C0603A"/><path d="M10 15 L13 3 L15.5 15" fill="none" stroke="#E29A1E" stroke-width="2"/></svg>
<div class="t" style="left:67px;top:472px;">Referenced Libraries</div>
<svg class="a" style="left:12px;top:493px" width="8" height="11" viewBox="0 0 8 11"><path d="M2 1.8 L5.8 5.5 L2 9.2" fill="none" stroke="#A3A3A3" stroke-width="1.6"/></svg>
<svg class="a" style="left:28px;top:490px" width="16" height="16" viewBox="0 0 16 16"><path d="M1.5 9 V2.5 Q1.5 1.2 2.8 1.2 H6.5 L7.5 2.2 H11.5 V9" fill="#F8E6B8" stroke="#9FB0C8" stroke-width="0.9"/><path d="M2 12.5 L5 6.8 H16 L13 12.5 Z" fill="#A8CBF0" stroke="#5A8AC8" stroke-width="0.9"/><path d="M14 0.5 V5 Q14 7 12 7 Q11 7 10.6 6" fill="none" stroke="#3A6FB0" stroke-width="1.3"/></svg>
<div class="t" style="left:49px;top:490px;">TestProj</div>
<svg class="a" style="left:12px;top:511px" width="8" height="11" viewBox="0 0 8 11"><path d="M2 1.8 L5.8 5.5 L2 9.2" fill="none" stroke="#A3A3A3" stroke-width="1.6"/></svg>
<svg class="a" style="left:28px;top:508px" width="16" height="16" viewBox="0 0 16 16"><path d="M1.5 9 V2.5 Q1.5 1.2 2.8 1.2 H6.5 L7.5 2.2 H11.5 V9" fill="#F8E6B8" stroke="#9FB0C8" stroke-width="0.9"/><path d="M2 12.5 L5 6.8 H16 L13 12.5 Z" fill="#A8CBF0" stroke="#5A8AC8" stroke-width="0.9"/><path d="M14 0.5 V5 Q14 7 12 7 Q11 7 10.6 6" fill="none" stroke="#3A6FB0" stroke-width="1.3"/></svg>
<div class="t" style="left:49px;top:508px;">UserAdminService</div>
<div class="a" style="left:383px;top:128px;width:14px;height:395px;background:#F0F0F0"></div>
<div class="a" style="left:384px;top:187px;width:12px;height:306px;background:#CDCDCD"></div>
<svg class="a" style="left:386px;top:134px" width="9" height="8" viewBox="0 0 9 8"><path d="M1 6 L4.5 2.5 L8 6" fill="none" stroke="#505050" stroke-width="1.8"/></svg>
<svg class="a" style="left:386px;top:512px" width="9" height="8" viewBox="0 0 9 8"><path d="M1 2 L4.5 5.5 L8 2" fill="none" stroke="#505050" stroke-width="1.8"/></svg>
<div class="panel" style="left:3px;top:532px;width:397px;height:299px">
<div class="hdr"></div>
<div class="a" style="left:2px;top:0;width:133px;height:26px;border-radius:6px 6px 0 0;background:linear-gradient(#DAE2ED,#fff)"></div>
</div>
<svg class="a" style="left:8px;top:537px" width="16" height="16" viewBox="0 0 16 16"><path d="M1 4 H5 L6 3 H14 V13 H1 Z" fill="#F3D58C" stroke="#B8862E" stroke-width="0.8"/><rect x="4" y="1" width="8" height="7" fill="#F8E2A6" stroke="#B8862E" stroke-width="0.7"/><rect x="1" y="9" width="10" height="6" fill="#fff" stroke="#6A7FA0" stroke-width="0.7"/><text x="2" y="14" font-size="4.5" font-family="Liberation Sans" fill="#3A9A4A" font-weight="bold">GIT</text></svg>
<div class="t" style="left:27px;top:538px;">Git Repositories</div>
<svg class="a" style="left:164px;top:564px" width="14" height="14" viewBox="0 0 14 14"><rect x="0.5" y="0.5" width="10" height="10" fill="#E3EEF3" stroke="#8E9BB5"/><rect x="2.5" y="2.5" width="10" height="10" fill="#D5E9EC" stroke="#8E9BB5"/><path d="M4.5 7.5 H10.5" stroke="#1F4F9A" stroke-width="1.2"/></svg>
<div class="a" style="left:184px;top:562px;width:1px;height:18px;background:#8A8A8A"></div>
<svg class="a" style="left:192px;top:562px" width="16" height="16" viewBox="0 0 16 16"><rect x="1" y="3" width="13" height="12" fill="#F3D58C" stroke="#B8862E" stroke-width="0.8"/><rect x="2" y="10" width="10" height="5" fill="#fff" stroke="#8895A8" stroke-width="0.6"/><text x="3" y="14.3" font-size="4.5" font-family="Liberation Sans" fill="#777">GIT</text><path d="M12 0.5 V6 M9.5 3.2 H14.5" stroke="#3C9A48" stroke-width="1.4"/></svg>
<svg class="a" style="left:215px;top:562px" width="16" height="16" viewBox="0 0 16 16"><rect x="1" y="3" width="13" height="12" fill="#F3D58C" stroke="#B8862E" stroke-width="0.8"/><rect x="2" y="10" width="10" height="5" fill="#fff" stroke="#8895A8" stroke-width="0.6"/><text x="3" y="14.3" font-size="4.5" font-family="Liberation Sans" fill="#777">GIT</text><path d="M6 5 Q10 -1 14 5" stroke="#3463A9" stroke-width="1.3" fill="none"/></svg>
<svg class="a" style="left:239px;top:562px" width="16" height="16" viewBox="0 0 16 16"><rect x="1" y="3" width="13" height="12" fill="#F3D58C" stroke="#B8862E" stroke-width="0.8"/><rect x="2" y="10" width="10" height="5" fill="#fff" stroke="#8895A8" stroke-width="0.6"/><text x="3" y="14.3" font-size="4.5" font-family="Liberation Sans" fill="#777">GIT</text><circle cx="12" cy="3" r="2.5" fill="#FFF3C4" stroke="#C8A040" stroke-width="0.7"/></svg>
<div class="a" style="left:261px;top:562px;width:1px;height:18px;background:#8A8A8A"></div>
<svg class="a" style="left:270px;top:562px" width="16" height="16" viewBox="0 0 16 16"><path d="M3 9 A5 5 0 0 1 11 4 L12.5 2.5 V7 H8 L9.6 5.4 A3 3 0 0 0 5 9 Z" fill="#F3B33D" stroke="#C48A22" stroke-width="0.6"/><path d="M13 7 A5 5 0 0 1 5 12 L3.5 13.5 V9 H8 L6.4 10.6 A3 3 0 0 0 11 7 Z" fill="#F3B33D" stroke="#C48A22" stroke-width="0.6"/></svg>
<svg class="a" style="left:293px;top:562px" width="15" height="15" viewBox="0 0 15 15"><path d="M0.8 4.5 L4.5 1 V3 H9.5 V6 H4.5 V8 Z" fill="#FCEBB8" stroke="#C48A22" stroke-width="0.9"/><path d="M14.2 10.5 L10.5 7 V9 H5.5 V12 H10.5 V14 Z" fill="#FCEBB8" stroke="#C48A22" stroke-width="0.9"/></svg>
<div class="a" style="left:315px;top:562px;width:1px;height:18px;background:#8A8A8A"></div>
<svg class="a" style="left:325px;top:563px" width="15" height="15" viewBox="0 0 15 15"><rect x="1" y="1" width="4" height="3" fill="#5B8FD0"/><path d="M3 4 V13 M3 8 H6 M3 12.5 H6" stroke="#5A6A8A" stroke-width="0.9"/><rect x="6" y="6.5" width="3" height="3" fill="#5B8FD0"/><path d="M10 8 H14 M7 12.5 H14 M7 3 H14" stroke="#5A6A8A" stroke-width="1"/></svg>
<div class="a" style="left:344px;top:559px;width:23px;height:21px;background:#CDE3F8;border:1px solid #7EB4EA"></div>
<svg class="a" style="left:347px;top:561px" width="17" height="16" viewBox="0 0 17 16"><rect x="7" y="2" width="9" height="12" fill="#FAE8A4" stroke="#C8A040" stroke-width="0.7"/><path d="M9 5 H14 M9 7.5 H14 M9 10 H14" stroke="#8A7A50" stroke-width="0.8"/><path d="M1 13 L5 3 L9 13 M3 9.5 H7" stroke="#2F5FA8" stroke-width="1.4" fill="none"/></svg>
<svg class="a" style="left:378px;top:563px" width="12" height="9" viewBox="0 0 12 9"><path d="M1 2.5 H11 L6 7.5 Z" fill="#fff" stroke="#6A6A6A" stroke-width="1"/></svg>
<svg class="a" style="left:117px;top:540px" width="10" height="10" viewBox="0 0 10 10"><path d="M0.5 0.5 H3 L5 2.5 L7 0.5 H9.5 V3 L7.5 5 L9.5 7 V9.5 H7 L5 7.5 L3 9.5 H0.5 V7 L2.5 5 L0.5 3 Z" fill="#fff" stroke="#555" stroke-width="1"/></svg>
<svg class="a" style="left:352px;top:538px" width="12" height="12" viewBox="0 0 12 12"><rect x="1.5" y="1.5" width="9" height="3" fill="#fff" stroke="#5A5A5A" stroke-width="1.1"/></svg><svg class="a" style="left:375px;top:538px" width="13" height="13" viewBox="0 0 13 13"><rect x="1.5" y="1.5" width="9" height="9" fill="#fff" stroke="#5A5A5A" stroke-width="1.1"/><path d="M1.5 3.7 H10.5" stroke="#5A5A5A" stroke-width="1"/></svg>
<div class="a" style="left:0;top:575px;width:397px;height:40px;overflow:hidden">
<div class="t" style="left:49px;top:8px;">calculator<span class="dec"> [master] - C:\Users\saiganesh\gpEclipse_workspace\calculator\.git</span></div>
<div class="t" style="left:49px;top:26px;"><span style="color:#9A8662;margin-right:2px">&gt;</span> TestDynamicWeb<span class="dec"> [master] - C:\Users\saiganesh\gpEclipse_workspace\TestDynamicWeb\.git</span></div>
</div>
<svg class="a" style="left:13px;top:586px" width="8" height="11" viewBox="0 0 8 11"><path d="M2 1.8 L5.8 5.5 L2 9.2" fill="none" stroke="#A3A3A3" stroke-width="1.6"/></svg>
<svg class="a" style="left:13px;top:604px" width="8" height="11" viewBox="0 0 8 11"><path d="M2 1.8 L5.8 5.5 L2 9.2" fill="none" stroke="#A3A3A3" stroke-width="1.6"/></svg>
<svg class="a" style="left:30px;top:582px" width="16" height="16" viewBox="0 0 16 16"><rect x="2.5" y="1.5" width="8" height="13" rx="2.5" fill="#F7C531" stroke="#A97B0C" stroke-width="1"/><path d="M2.5 4 Q6.5 6 10.5 4" fill="none" stroke="#A97B0C" stroke-width="0.8"/></svg>
<svg class="a" style="left:30px;top:600px" width="16" height="16" viewBox="0 0 16 16"><rect x="2.5" y="1.5" width="8" height="13" rx="2.5" fill="#F7C531" stroke="#A97B0C" stroke-width="1"/><path d="M2.5 4 Q6.5 6 10.5 4" fill="none" stroke="#A97B0C" stroke-width="0.8"/></svg>
<div class="a" style="left:6px;top:812px;width:391px;height:16px;background:#F0F0F0"></div>
<div class="a" style="left:23px;top:812px;width:259px;height:15px;background:#CDCDCD"></div>
<svg class="a" style="left:10px;top:815px" width="8" height="9" viewBox="0 0 8 9"><path d="M6 1 L2.5 4.5 L6 8" fill="none" stroke="#505050" stroke-width="1.8"/></svg>
<svg class="a" style="left:386px;top:815px" width="8" height="9" viewBox="0 0 8 9"><path d="M2 1 L5.5 4.5 L2 8" fill="none" stroke="#505050" stroke-width="1.8"/></svg>
<div class="panel" style="left:405px;top:78px;width:892px;height:562px;border:1px solid #BDBDBD">
<div class="hdr" style="background:#D3DFF0;height:25px;border-bottom:1px solid #BFC8D8"></div>
<div class="a" style="left:650px;top:-1px;width:135px;height:27px;border-radius:5px 5px 0 0;background:#fff;border:1px solid #BDBDBD;border-bottom:none"></div>
</div>
<svg class="a" style="left:411px;top:84px" width="16" height="16" viewBox="0 0 16 16"><path d="M2.5 1.5 H9.5 L12.5 4.5 V14.5 H2.5 Z" fill="#F2F6FB" stroke="#A88439" stroke-width="1"/><path d="M9.5 1.5 V4.5 H12.5 Z" fill="#E2C98A" stroke="#A88439" stroke-width="0.6"/><path d="M8.2 3.8 V10.2 Q8.2 12.2 6.2 12.2 Q5 12.2 4.4 11.6" fill="none" stroke="#3269A8" stroke-width="1.8"/><path d="M0.5 15.5 L3.5 9.5 L6.5 15.5 Z" fill="#F4C24B" stroke="#B8862E" stroke-width="0.8"/><rect x="3.1" y="11.3" width="0.9" height="2.2" fill="#222"/><rect x="3.1" y="14" width="0.9" height="0.9" fill="#222"/></svg>
<div class="t" style="left:430px;top:85px;">preparedStm...</div>
<svg class="a" style="left:540px;top:84px" width="16" height="16" viewBox="0 0 16 16"><path d="M2.5 1.5 H9.5 L12.5 4.5 V14.5 H2.5 Z" fill="#F2F6FB" stroke="#A88439" stroke-width="1"/><path d="M9.5 1.5 V4.5 H12.5 Z" fill="#E2C98A" stroke="#A88439" stroke-width="0.6"/><path d="M8.2 3.8 V10.2 Q8.2 12.2 6.2 12.2 Q5 12.2 4.4 11.6" fill="none" stroke="#3269A8" stroke-width="1.8"/></svg>
<div class="t" style="left:559px;top:85px;">JDBC_Insert_...</div>
<svg class="a" style="left:664px;top:84px" width="16" height="16" viewBox="0 0 16 16"><path d="M2.5 1.5 H9.5 L12.5 4.5 V14.5 H2.5 Z" fill="#F2F6FB" stroke="#A88439" stroke-width="1"/><path d="M9.5 1.5 V4.5 H12.5 Z" fill="#E2C98A" stroke="#A88439" stroke-width="0.6"/><path d="M8.2 3.8 V10.2 Q8.2 12.2 6.2 12.2 Q5 12.2 4.4 11.6" fill="none" stroke="#3269A8" stroke-width="1.8"/></svg>
<div class="t" style="left:683px;top:85px;">JDBCStatemen...</div>
<svg class="a" style="left:799px;top:84px" width="16" height="16" viewBox="0 0 16 16"><path d="M2.5 1.5 H9.5 L12.5 4.5 V14.5 H2.5 Z" fill="#F2F6FB" stroke="#A88439" stroke-width="1"/><path d="M9.5 1.5 V4.5 H12.5 Z" fill="#E2C98A" stroke="#A88439" stroke-width="0.6"/><path d="M8.2 3.8 V10.2 Q8.2 12.2 6.2 12.2 Q5 12.2 4.4 11.6" fill="none" stroke="#3269A8" stroke-width="1.8"/></svg>
<div class="t" style="left:818px;top:85px;">MainClass.java</div>
<svg class="a" style="left:927px;top:84px" width="16" height="16" viewBox="0 0 16 16"><path d="M2.5 1.5 H9.5 L12.5 4.5 V14.5 H2.5 Z" fill="#F2F6FB" stroke="#A88439" stroke-width="1"/><path d="M9.5 1.5 V4.5 H12.5 Z" fill="#E2C98A" stroke="#A88439" stroke-width="0.6"/><path d="M8.2 3.8 V10.2 Q8.2 12.2 6.2 12.2 Q5 12.2 4.4 11.6" fill="none" stroke="#3269A8" stroke-width="1.8"/></svg>
<div class="t" style="left:946px;top:85px;">Jdbc_Batch.java</div>
<svg class="a" style="left:1061px;top:84px" width="16" height="16" viewBox="0 0 16 16"><path d="M2.5 1.5 H9.5 L12.5 4.5 V14.5 H2.5 Z" fill="#F2F6FB" stroke="#A88439" stroke-width="1"/><path d="M9.5 1.5 V4.5 H12.5 Z" fill="#E2C98A" stroke="#A88439" stroke-width="0.6"/><path d="M8.2 3.8 V10.2 Q8.2 12.2 6.2 12.2 Q5 12.2 4.4 11.6" fill="none" stroke="#3269A8" stroke-width="1.8"/></svg>
<div class="t" style="left:1080px;top:85px;">MainClass2.java</div>
<svg class="a" style="left:1172px;top:87px" width="10" height="10" viewBox="0 0 10 10"><path d="M0.5 0.5 H3 L5 2.5 L7 0.5 H9.5 V3 L7.5 5 L9.5 7 V9.5 H7 L5 7.5 L3 9.5 H0.5 V7 L2.5 5 L0.5 3 Z" fill="#fff" stroke="#555" stroke-width="1"/></svg>
<svg class="a" style="left:1198px;top:85px" width="8" height="7" viewBox="0 0 8 7"><path d="M0.5 0.5 L3.5 3 L0.5 5.5 M3.5 0.5 L6.5 3 L3.5 5.5" fill="none" stroke="#111" stroke-width="1.3"/></svg>
<div class="t" style="left:1204px;top:89px;font-size:9px">99+</div>
<svg class="a" style="left:1248px;top:85px" width="12" height="12" viewBox="0 0 12 12"><rect x="1.5" y="1.5" width="9" height="3" fill="#fff" stroke="#5A5A5A" stroke-width="1.1"/></svg><svg class="a" style="left:1271px;top:85px" width="13" height="13" viewBox="0 0 13 13"><rect x="1.5" y="1.5" width="9" height="9" fill="#fff" stroke="#5A5A5A" stroke-width="1.1"/><path d="M1.5 3.7 H10.5" stroke="#5A5A5A" stroke-width="1"/></svg>
<div class="a" style="left:406px;top:104px;width:14px;height:516px;background:#F7F7F7"></div>
<div class="a" style="left:408px;top:166px;width:12px;height:45px;background:repeating-conic-gradient(#2E6FD8 0% 25%, #fff 0% 50%) 0 0/2px 2px"></div>
<div class="a" style="left:443px;top:104px;width:1px;height:516px;background:#F4F4F4"></div>
<div class="a" style="left:446px;top:166px;width:818px;height:15px;background:#E8F2FE"></div>
<div class="a" style="left:873px;top:166px;width:84px;height:15px;background:#0078D7"></div>
<div class="a" style="left:406px;top:104px;width:859px;height:516px;overflow:hidden">
<div class="code" style="left:21px;top:4px;color:#787878">1</div>
<div class="code" style="left:40px;top:4px"><span class="k">import</span> java.sql.Connection;</div>
<div class="code" style="left:21px;top:19px;color:#787878">5</div>
<div class="code" style="left:40px;top:19px"></div>
<div class="code" style="left:21px;top:34px;color:#787878">6</div>
<div class="code" style="left:40px;top:34px"><span class="k">public</span> <span class="k">class</span> MainClass2 {</div>
<div class="code" style="left:21px;top:49px;color:#787878">7</div>
<div class="code" style="left:40px;top:49px"></div>
<div class="code" style="left:21px;top:64px;color:#787878">8</div>
<div class="code" style="left:40px;top:64px">  <span class="k">private</span> <span class="k">static</span> <span class="k">final</span> String <span class="f">EMPLOYEE_TABLE</span> = <span class="s">"create table </span><span style="color:#fff">MyEmployees5</span><span class="s"> ( "</span></div>
<div class="code" style="left:21px;top:79px;color:#787878">9</div>
<div class="code" style="left:40px;top:79px">      + <span class="s">"   id INT PRIMARY KEY, firstName VARCHAR(20), lastName VARCHAR(20), "</span></div>
<div class="code" style="left:14px;top:94px;color:#787878">10</div>
<div class="code" style="left:40px;top:94px">      + <span class="s">"   title VARCHAR(20), salary INT "</span> + <span class="s">")"</span>;</div>
<div class="code" style="left:14px;top:109px;color:#787878">11</div>
<div class="code" style="left:40px;top:109px"></div>
<div class="code" style="left:14px;top:124px;color:#787878">12</div>
<div class="code" style="left:40px;top:124px">  <span class="k">public</span> <span class="k">static</span> Connection getConnection() <span class="k">throws</span> ClassNotFoundException, SQLException {</div>
<div class="code" style="left:14px;top:139px;color:#787878">13</div>
<div class="code" style="left:40px;top:139px">    String <span class="v">driver</span> = <span class="s">"oracle.jdbc.driver.OracleDriver"</span>;</div>
<div class="code" style="left:14px;top:154px;color:#787878">14</div>
<div class="code" style="left:40px;top:154px">    String <span class="v">url</span> = <span class="s">"jdbc:oracle:thin:@localhost:1521:XE"</span>;</div>
<div class="code" style="left:14px;top:169px;color:#787878">15</div>
<div class="code" style="left:40px;top:169px">    String <span class="v">username</span> = <span class="s">"sample"</span>;</div>
<div class="code" style="left:14px;top:184px;color:#787878">16</div>
<div class="code" style="left:40px;top:184px">    String <span class="v">password</span> = <span class="s">"admin"</span>;</div>
<div class="code" style="left:14px;top:199px;color:#787878">17</div>
<div class="code" style="left:40px;top:199px">    Class.<span class="i">forName</span>(<span class="v">driver</span>);</div>
<div class="code" style="left:14px;top:214px;color:#787878">18</div>
<div class="code" style="left:40px;top:214px">    Connection <span class="v">conn</span> = DriverManager.<span class="i">getConnection</span>(<span class="v">url</span>, <span class="v">username</span>, <span class="v">password</span>);</div>
<div class="code" style="left:14px;top:229px;color:#787878">19</div>
<div class="code" style="left:40px;top:229px">    <span class="k">return</span> <span class="v">conn</span>;</div>
<div class="code" style="left:14px;top:244px;color:#787878">20</div>
<div class="code" style="left:40px;top:244px">  }</div>
<div class="code" style="left:14px;top:259px;color:#787878">21</div>
<div class="code" style="left:40px;top:259px"></div>
<div class="code" style="left:14px;top:274px;color:#787878">22</div>
<div class="code" style="left:40px;top:274px">  <span class="k">public</span> <span class="k">static</span> <span class="k">void</span> main(String <span class="v">args</span>[]) {</div>
<div class="code" style="left:14px;top:289px;color:#787878">23</div>
<div class="code" style="left:40px;top:289px">    Connection <span class="v">conn</span> = <span class="k">null</span>;</div>
<div class="code" style="left:14px;top:304px;color:#787878">24</div>
<div class="code" style="left:40px;top:304px">    Statement <span class="v">stmt</span> = <span class="k">null</span>;</div>
<div class="code" style="left:14px;top:319px;color:#787878">25</div>
<div class="code" style="left:40px;top:319px">    <span class="k">try</span> {</div>
<div class="code" style="left:14px;top:334px;color:#787878">26</div>
<div class="code" style="left:40px;top:334px">      <span class="v">conn</span> = <span class="i">getConnection</span>();</div>
<div class="code" style="left:14px;top:349px;color:#787878">27</div>
<div class="code" style="left:40px;top:349px">      <span class="v">stmt</span> = <span class="v">conn</span>.createStatement();</div>
<div class="code" style="left:14px;top:364px;color:#787878">28</div>
<div class="code" style="left:40px;top:364px">      <span class="v">stmt</span>.executeUpdate(<span class="f">EMPLOYEE_TABLE</span>);</div>
<div class="code" style="left:14px;top:379px;color:#787878">29</div>
<div class="code" style="left:40px;top:379px">      <span class="v">stmt</span>.executeUpdate(<span class="s">"insert into MyEmployees5(id, firstName) values(100, 'A')"</span>);</div>
<div class="code" style="left:14px;top:394px;color:#787878">30</div>
<div class="code" style="left:40px;top:394px">      <span class="v">stmt</span>.executeUpdate(<span class="s">"insert into MyEmployees5(id, firstName) values(200, 'B')"</span>);</div>
<div class="code" style="left:14px;top:409px;color:#787878">31</div>
<div class="code" style="left:40px;top:409px">      System.<span class="f">out</span>.println(<span class="s">"CreateEmployeeTableOracle: main(): table created."</span>);</div>
<div class="code" style="left:14px;top:424px;color:#787878">32</div>
<div class="code" style="left:40px;top:424px">    } <span class="k">catch</span> (ClassNotFoundException <span class="v">e</span>) {</div>
<div class="code" style="left:14px;top:439px;color:#787878">33</div>
<div class="code" style="left:40px;top:439px">      System.<span class="f">out</span>.println(<span class="s">"error: failed to load Oracle driver."</span>);</div>
<div class="code" style="left:14px;top:454px;color:#787878">34</div>
<div class="code" style="left:40px;top:454px">      <span class="v">e</span>.printStackTrace();</div>
<div class="code" style="left:14px;top:469px;color:#787878">35</div>
<div class="code" style="left:40px;top:469px">    } <span class="k">catch</span> (SQLException <span class="v">e</span>) {</div>
<div class="code" style="left:14px;top:484px;color:#787878">36</div>
<div class="code" style="left:40px;top:484px">      System.<span class="f">out</span>.println(<span class="s">"error: failed to create a connection object."</span>);</div>
<div class="code" style="left:14px;top:499px;color:#787878">37</div>
<div class="code" style="left:40px;top:499px">      <span class="v">e</span>.printStackTrace();</div>
<div class="code" style="left:14px;top:514px;color:#787878">38</div>
<div class="code" style="left:40px;top:514px">    } <span class="k">finally</span> {</div>
</div>
<svg class="a" style="left:434px;top:109px" width="9" height="9" viewBox="0 0 9 9"><circle cx="4.5" cy="4.5" r="4" fill="#fff" stroke="#8FA3B8" stroke-width="0.9"/><path d="M2.3 4.5 H6.7" stroke="#333" stroke-width="1"/><path d="M4.5 2.3 V6.7" stroke="#333" stroke-width="1"/></svg>
<div class="a" style="left:635px;top:108px;width:8px;height:13px;border:1px solid #9A9A9A"></div>
<div class="a" style="left:637px;top:117px;width:5px;height:1px;border-top:1px dotted #777"></div>
<svg class="a" style="left:434px;top:169px" width="9" height="9" viewBox="0 0 9 9"><circle cx="4.5" cy="4.5" r="4" fill="#fff" stroke="#8FA3B8" stroke-width="0.9"/><path d="M2.3 4.5 H6.7" stroke="#333" stroke-width="1"/></svg>
<svg class="a" style="left:434px;top:229px" width="9" height="9" viewBox="0 0 9 9"><circle cx="4.5" cy="4.5" r="4" fill="#fff" stroke="#8FA3B8" stroke-width="0.9"/><path d="M2.3 4.5 H6.7" stroke="#333" stroke-width="1"/></svg>
<svg class="a" style="left:434px;top:379px" width="9" height="9" viewBox="0 0 9 9"><circle cx="4.5" cy="4.5" r="4" fill="#fff" stroke="#8FA3B8" stroke-width="0.9"/><path d="M2.3 4.5 H6.7" stroke="#333" stroke-width="1"/></svg>
<div class="a" style="left:1265px;top:106px;width:16px;height:514px;background:#F0F0F0"></div>
<div class="a" style="left:1266px;top:123px;width:14px;height:350px;background:#CDCDCD"></div>
<div class="a" style="left:406px;top:620px;width:38px;height:17px;background:#F7F7F7"></div>
<div class="a" style="left:444px;top:621px;width:837px;height:16px;background:#F0F0F0"></div>
<svg class="a" style="left:1269px;top:110px" width="9" height="8" viewBox="0 0 9 8"><path d="M1 6 L4.5 2.5 L8 6" fill="none" stroke="#505050" stroke-width="1.8"/></svg>
<svg class="a" style="left:1269px;top:606px" width="9" height="8" viewBox="0 0 9 8"><path d="M1 2 L4.5 5.5 L8 2" fill="none" stroke="#505050" stroke-width="1.8"/></svg>
<svg class="a" style="left:449px;top:624px" width="8" height="9" viewBox="0 0 8 9"><path d="M6 1 L2.5 4.5 L6 8" fill="none" stroke="#A8A8A8" stroke-width="1.8"/></svg>
<svg class="a" style="left:1252px;top:624px" width="8" height="9" viewBox="0 0 8 9"><path d="M2 1 L5.5 4.5 L2 8" fill="none" stroke="#A8A8A8" stroke-width="1.8"/></svg>
<div class="a" style="left:1281px;top:104px;width:14px;height:534px;background:#F8F8F8"></div>
<div class="panel" style="left:1301px;top:78px;width:296px;height:279px">
<div class="hdr"></div>
<div class="a" style="left:2px;top:0;width:93px;height:26px;border-radius:6px 6px 0 0;background:linear-gradient(#DAE2ED,#fff)"></div>
</div>
<svg class="a" style="left:1309px;top:84px" width="13" height="16" viewBox="0 0 13 16"><path d="M1.5 1.5 H11.5 V14.5 L9.5 13 L7 14.5 L4.5 13 L1.5 14.5 Z" fill="#F2F2F2" stroke="#6A6A6A"/><path d="M3.5 4 H9.5 M3.5 6 H9.5 M3.5 8 H9.5 M3.5 10 H9.5" stroke="#7A7A7A" stroke-width="0.8"/></svg>
<div class="t" style="left:1325px;top:85px;">Task List</div>
<svg class="a" style="left:1339px;top:110px" width="16" height="16" viewBox="0 0 16 16"><path d="M1.5 6 L4 3.5 H11.5 V14.5 H1.5 Z" fill="#F4F8FC" stroke="#8A9AB0"/><circle cx="11.5" cy="3.5" r="3" fill="#FFF3C4" stroke="#C8A040" stroke-width="0.8"/><path d="M11.5 1.5 V5.5 M9.5 3.5 H13.5" stroke="#C8A040" stroke-width="0.8"/></svg>
<svg class="a" style="left:1360px;top:115px" width="8" height="6" viewBox="0 0 8 6"><path d="M0.5 1 H7.5 L4 5 Z" fill="#111"/></svg>
<div class="a" style="left:1373px;top:108px;width:1px;height:18px;background:#8A8A8A"></div>
<div class="a" style="left:1379px;top:106px;width:23px;height:21px;background:#CDE3F8;border:1px solid #7EB4EA"></div>
<svg class="a" style="left:1383px;top:109px" width="16" height="16" viewBox="0 0 16 16"><rect x="1" y="1" width="7" height="4" fill="#E8D8A8" stroke="#8A7A50" stroke-width="0.7"/><path d="M3 5 V14 M3 9 H6 M3 13 H6" stroke="#5A6A8A" stroke-width="0.8"/><rect x="6" y="7.5" width="3" height="3" fill="none" stroke="#5A6A8A" stroke-width="0.8"/><rect x="6" y="11.5" width="3" height="3" fill="none" stroke="#5A6A8A" stroke-width="0.8"/><path d="M10 9 H15 M10 13 H15 M9 3 H15" stroke="#5A6A8A" stroke-width="1"/></svg>
<svg class="a" style="left:1405px;top:110px" width="16" height="16" viewBox="0 0 16 16"><circle cx="4.5" cy="4.5" r="3.5" fill="#fff" stroke="#5A6A8A" stroke-width="0.8"/><path d="M4.5 2.5 V4.5 H6" stroke="#5A6A8A" stroke-width="0.7" fill="none"/><path d="M3 8 V14 M3 10 H6 M3 13.5 H6" stroke="#5A6A8A" stroke-width="0.8"/><rect x="6" y="8.5" width="3" height="3" fill="none" stroke="#5A6A8A" stroke-width="0.8"/><path d="M10 10 H15 M10 13.5 H15" stroke="#5A6A8A" stroke-width="1"/></svg>
<div class="a" style="left:1427px;top:108px;width:1px;height:18px;background:#8A8A8A"></div>
<svg class="a" style="left:1437px;top:110px" width="16" height="16" viewBox="0 0 16 16"><circle cx="4.5" cy="5" r="3.3" fill="#C8C8C8"/><circle cx="10.5" cy="6" r="3.3" fill="#B8B8B8"/><circle cx="6" cy="10.5" r="3.5" fill="#8E7FB0"/></svg>
<div class="a" style="left:1458px;top:108px;width:1px;height:18px;background:#8A8A8A"></div>
<svg class="a" style="left:1467px;top:110px" width="16" height="16" viewBox="0 0 16 16"><path d="M2 4 L8 10 M8 4 L2 10" stroke="#3463A9" stroke-width="1.2"/><path d="M1 1 L15 15" stroke="#1F3F7A" stroke-width="1.3"/></svg>
<svg class="a" style="left:1489px;top:110px" width="16" height="16" viewBox="0 0 16 16"><circle cx="4.5" cy="2.5" r="2" fill="#E8A33A"/><path d="M2 6 H7 V10 H6 V15 H3 V10 H2 Z" fill="#E8A33A" stroke="#A66A10" stroke-width="0.5"/><circle cx="11" cy="2.5" r="2" fill="#9AA6C0"/><path d="M8.5 6 H13.5 V10 H12.5 V15 H9.5 V10 H8.5 Z" fill="#9AA6C0"/><path d="M7 1 L15 15" stroke="#1F3F7A" stroke-width="1.2"/></svg>
<svg class="a" style="left:1515px;top:111px" width="14" height="14" viewBox="0 0 14 14"><rect x="0.5" y="0.5" width="10" height="10" fill="#E3EEF3" stroke="#8E9BB5"/><rect x="2.5" y="2.5" width="10" height="10" fill="#D5E9EC" stroke="#8E9BB5"/><path d="M4.5 7.5 H10.5" stroke="#1F4F9A" stroke-width="1.2"/></svg>
<div class="a" style="left:1535px;top:108px;width:1px;height:18px;background:#8A8A8A"></div>
<svg class="a" style="left:1544px;top:110px" width="16" height="16" viewBox="0 0 16 16"><ellipse cx="10" cy="3" rx="4.5" ry="2" fill="#9CC3E8" stroke="#3463A9" stroke-width="0.7"/><path d="M5.5 3 V13 A4.5 2 0 0 0 14.5 13 V3" fill="#9CC3E8" stroke="#3463A9" stroke-width="0.7"/><path d="M1 7 L4 4 L7 7 M4 4 V12 L7 9" stroke="#E29A1E" stroke-width="1.5" fill="none"/></svg>
<svg class="a" style="left:1575px;top:109px" width="12" height="9" viewBox="0 0 12 9"><path d="M1 2.5 H11 L6 7.5 Z" fill="#fff" stroke="#6A6A6A" stroke-width="1"/></svg>
<svg class="a" style="left:1425px;top:139px" width="5" height="8" viewBox="0 0 5 8"><path d="M0.5 0.5 L4.5 4 L0.5 7.5 Z" fill="#333"/></svg>
<svg class="a" style="left:1465px;top:139px" width="5" height="8" viewBox="0 0 5 8"><path d="M0.5 0.5 L4.5 4 L0.5 7.5 Z" fill="#333"/></svg>
<svg class="a" style="left:1579px;top:136px" width="15" height="15" viewBox="0 0 15 15"><circle cx="7.5" cy="7.5" r="6.7" fill="#fff" stroke="#3C7DC4" stroke-width="1.1"/><text x="7.5" y="11.5" text-anchor="middle" font-size="10.5" font-weight="bold" font-family="Liberation Sans" fill="#3C7DC4">?</text></svg>
<svg class="a" style="left:1378px;top:87px" width="10" height="10" viewBox="0 0 10 10"><path d="M0.5 0.5 H3 L5 2.5 L7 0.5 H9.5 V3 L7.5 5 L9.5 7 V9.5 H7 L5 7.5 L3 9.5 H0.5 V7 L2.5 5 L0.5 3 Z" fill="#fff" stroke="#555" stroke-width="1"/></svg>
<svg class="a" style="left:1549px;top:85px" width="12" height="12" viewBox="0 0 12 12"><rect x="1.5" y="1.5" width="9" height="3" fill="#fff" stroke="#5A5A5A" stroke-width="1.1"/></svg><svg class="a" style="left:1572px;top:85px" width="13" height="13" viewBox="0 0 13 13"><rect x="1.5" y="1.5" width="9" height="9" fill="#fff" stroke="#5A5A5A" stroke-width="1.1"/><path d="M1.5 3.7 H10.5" stroke="#5A5A5A" stroke-width="1"/></svg>
<div class="a" style="left:1307px;top:133px;width:103px;height:19px;border:1px solid #ABABAB;background:#fff"></div>
<div class="t" style="left:1317px;top:136px;color:#333">Find</div>
<svg class="a" style="left:1395px;top:137px" width="12" height="12" viewBox="0 0 12 12"><circle cx="5" cy="5" r="3.8" fill="none" stroke="#555" stroke-width="1.2"/><path d="M7.8 7.8 L11.5 11.5" stroke="#555" stroke-width="1.8"/></svg>
<div class="t" style="left:1438px;top:136px;color:#1A5FB4">All</div>
<div class="t" style="left:1479px;top:136px;color:#1A5FB4">Activate...</div>
<div class="panel" style="left:1301px;top:361px;width:296px;height:279px">
<div class="hdr"></div>
<div class="a" style="left:2px;top:0;width:90px;height:26px;border-radius:6px 6px 0 0;background:linear-gradient(#DAE2ED,#fff)"></div>
</div>
<svg class="a" style="left:1307px;top:368px" width="15" height="16" viewBox="0 0 15 16"><rect x="0.5" y="0.5" width="5" height="5" fill="#fff" stroke="#2F6FB8"/><rect x="0.5" y="9.5" width="5" height="5" fill="#fff" stroke="#2F6FB8"/><path d="M3 5.5 V9.5" stroke="#2F6FB8"/><path d="M7 2.5 H14 M9 7.5 H14 M9 12.5 H14" stroke="#5A6A8A" stroke-width="1"/><rect x="6.5" y="6.5" width="2" height="2" fill="#2F6FB8"/></svg>
<div class="t" style="left:1325px;top:368px;">Outline</div>
<div class="a" style="left:1403px;top:389px;width:187px;height:21px;background:#F3F5FB"></div>
<svg class="a" style="left:1407px;top:393px" width="14" height="14" viewBox="0 0 14 14"><circle cx="4" cy="4" r="3.2" fill="#CFCFCF"/><circle cx="10" cy="5.5" r="3.2" fill="#C0C0C0"/><circle cx="5" cy="9.5" r="3.4" fill="#9E9E9E"/></svg>
<svg class="a" style="left:1430px;top:393px" width="14" height="14" viewBox="0 0 14 14"><rect x="0.5" y="0.5" width="10" height="10" fill="#E3EEF3" stroke="#8E9BB5"/><rect x="2.5" y="2.5" width="10" height="10" fill="#D5E9EC" stroke="#8E9BB5"/><path d="M4.5 7.5 H10.5" stroke="#1F4F9A" stroke-width="1.2"/></svg>
<svg class="a" style="left:1452px;top:392px" width="16" height="16" viewBox="0 0 16 16"><path d="M3 1 V14 M1 11.5 L3 14 L5 11.5" stroke="#1F3F7A" stroke-width="1.1" fill="none"/><text x="6" y="7" font-size="8" font-weight="bold" font-family="Liberation Sans" fill="#2E8B57">a</text><text x="9" y="15" font-size="8" font-weight="bold" font-family="Liberation Sans" fill="#8E44AD">z</text></svg>
<svg class="a" style="left:1475px;top:392px" width="16" height="16" viewBox="0 0 16 16"><circle cx="7" cy="8" r="5.5" fill="#5FA8E0"/><text x="7" y="11" text-anchor="middle" font-size="8" font-weight="bold" font-family="Liberation Sans" fill="#fff">F</text><path d="M1 1 L15 15" stroke="#1F3F7A" stroke-width="1.3"/></svg>
<svg class="a" style="left:1497px;top:392px" width="16" height="16" viewBox="0 0 16 16"><circle cx="6" cy="10" r="4" fill="#8A8A8A"/><path d="M1 4 L12 15" stroke="#1F3F7A" stroke-width="1.3"/><text x="13" y="6" text-anchor="middle" font-size="7" font-weight="bold" font-family="Liberation Sans" fill="#2F6FB8">S</text></svg>
<svg class="a" style="left:1524px;top:395px" width="9" height="9" viewBox="0 0 9 9"><circle cx="4.5" cy="4.5" r="4" fill="#3D9A4A" stroke="#2A7A36" stroke-width="0.6"/><ellipse cx="4.5" cy="3.3" rx="2.2" ry="1.4" fill="#8FD08F" opacity="0.6"/></svg>
<svg class="a" style="left:1545px;top:392px" width="16" height="16" viewBox="0 0 16 16"><circle cx="6" cy="10" r="4" fill="#8A8A8A"/><path d="M1 4 L12 15" stroke="#1F3F7A" stroke-width="1.3"/><text x="13" y="6" text-anchor="middle" font-size="7" font-weight="bold" font-family="Liberation Sans" fill="#2F6FB8">L</text></svg>
<svg class="a" style="left:1575px;top:393px" width="12" height="9" viewBox="0 0 12 9"><path d="M1 2.5 H11 L6 7.5 Z" fill="#fff" stroke="#6A6A6A" stroke-width="1"/></svg>
<svg class="a" style="left:1372px;top:370px" width="10" height="10" viewBox="0 0 10 10"><path d="M0.5 0.5 H3 L5 2.5 L7 0.5 H9.5 V3 L7.5 5 L9.5 7 V9.5 H7 L5 7.5 L3 9.5 H0.5 V7 L2.5 5 L0.5 3 Z" fill="#fff" stroke="#555" stroke-width="1"/></svg>
<svg class="a" style="left:1549px;top:368px" width="12" height="12" viewBox="0 0 12 12"><rect x="1.5" y="1.5" width="9" height="3" fill="#fff" stroke="#5A5A5A" stroke-width="1.1"/></svg><svg class="a" style="left:1572px;top:368px" width="13" height="13" viewBox="0 0 13 13"><rect x="1.5" y="1.5" width="9" height="9" fill="#fff" stroke="#5A5A5A" stroke-width="1.1"/><path d="M1.5 3.7 H10.5" stroke="#5A5A5A" stroke-width="1"/></svg>
<svg class="a" style="left:1312px;top:415px" width="10" height="9" viewBox="0 0 10 9"><path d="M0.8 2.2 L5 6.4 L9.2 2.2" fill="none" stroke="#404040" stroke-width="1.7"/></svg>
<div class="t" style="left:1359px;top:413px;">MainClass2</div>
<div class="a" style="left:1356px;top:428px;width:166px;height:17px;background:#D9D9D9"></div>
<div class="t" style="left:1384px;top:431px;letter-spacing:-0.3px">EMPLOYEE_TABLE : String</div>
<svg class="a" style="left:1332px;top:412px" width="22" height="17" viewBox="0 0 22 17"><circle cx="7" cy="7" r="6.5" fill="#2E9A3E"/><circle cx="7" cy="7" r="5.3" fill="#4DB55A"/><path d="M9.4 4.8 A3.1 3.1 0 1 0 9.4 9.2" stroke="#fff" stroke-width="1.9" fill="none"/><path d="M15 10 L21 13 L15 16 Z" fill="#3D9A4A"/></svg>
<svg class="a" style="left:1361px;top:428px" width="18" height="16" viewBox="0 0 18 16"><rect x="1" y="9" width="5" height="5" fill="#fff" stroke="#D0304A" stroke-width="1"/><path d="M5 9 L8 6" stroke="#D0304A"/><text x="6" y="7" font-size="8" font-family="Liberation Sans" fill="#D0304A">S</text><text x="12" y="7" font-size="8" font-family="Liberation Sans" fill="#2F6FB8">F</text></svg>
<svg class="a" style="left:1359px;top:450px" width="10" height="10" viewBox="0 0 10 10"><circle cx="5.0" cy="5.0" r="4.5" fill="#3D9A4A" stroke="#2A7A36" stroke-width="0.6"/><ellipse cx="5.0" cy="3.8" rx="2.475" ry="1.575" fill="#8FD08F" opacity="0.6"/></svg>
<svg class="a" style="left:1359px;top:468px" width="10" height="10" viewBox="0 0 10 10"><circle cx="5.0" cy="5.0" r="4.5" fill="#3D9A4A" stroke="#2A7A36" stroke-width="0.6"/><ellipse cx="5.0" cy="3.8" rx="2.475" ry="1.575" fill="#8FD08F" opacity="0.6"/></svg>
<div class="t" style="left:1374px;top:446px;font-size:9px;color:#D0304A;line-height:10px">S</div>
<div class="t" style="left:1374px;top:464px;font-size:9px;color:#D0304A;line-height:10px">S</div>
<div class="t" style="left:1384px;top:449px;">getConnection()<span class="dec"> : Connection</span></div>
<div class="t" style="left:1384px;top:467px;">main(String[])<span class="dec"> : void</span></div>
<div class="panel" style="left:405px;top:644px;width:1192px;height:187px">
<div class="hdr"></div>
<div class="a" style="left:241px;top:0;width:94px;height:26px;border-radius:6px 6px 0 0;background:linear-gradient(#DAE2ED,#fff)"></div>
</div>
<div class="t" style="left:429px;top:651px;color:#8E8E8E">Problems</div>
<div class="t" style="left:509px;top:651px;color:#8E8E8E">Javadoc</div>
<div class="t" style="left:581px;top:651px;color:#8E8E8E">Declaration</div>
<div class="t" style="left:669px;top:651px;">Console</div>
<div class="t" style="left:762px;top:651px;color:#8E8E8E">Coverage</div>
<div class="t" style="left:842px;top:651px;color:#8E8E8E">Git Staging</div>
<div class="t" style="left:930px;top:651px;color:#8E8E8E">History</div>
<div class="t" style="left:997px;top:651px;color:#8E8E8E">Git Tree Compare</div>
<svg class="a" style="left:720px;top:653px" width="10" height="10" viewBox="0 0 10 10"><path d="M0.5 0.5 H3 L5 2.5 L7 0.5 H9.5 V3 L7.5 5 L9.5 7 V9.5 H7 L5 7.5 L3 9.5 H0.5 V7 L2.5 5 L0.5 3 Z" fill="#fff" stroke="#555" stroke-width="1"/></svg>
<svg class="a" style="left:409px;top:650px" width="16" height="16" viewBox="0 0 16 16"><rect x="3.5" y="1.5" width="10" height="13" fill="#fff" stroke="#9AA6B8"/><path d="M5.5 4.5 H11.5 M5.5 7 H11.5" stroke="#C0C8D4"/><circle cx="5" cy="4" r="3" fill="#E05050"/><rect x="0.5" y="9.5" width="6" height="6" fill="#E04A4A"/><path d="M1.8 10.8 L5.2 14.2 M5.2 10.8 L1.8 14.2" stroke="#fff" stroke-width="1"/></svg>
<div class="t" style="left:491px;top:650px;font-size:12px;color:#8AA0C8">@</div>
<svg class="a" style="left:561px;top:650px" width="16" height="16" viewBox="0 0 16 16"><path d="M1.5 1.5 H9 L12.5 5 V14.5 H1.5 Z" fill="#FDF6E3" stroke="#C8A050"/><path d="M5 5 Q3.5 5 4 7.5 Q4 8.5 3 8.5 Q4 8.5 4 9.5 Q3.5 12 5 12 M8 5 Q9.5 5 9 7.5 Q9 8.5 10 8.5 Q9 8.5 9 9.5 Q9.5 12 8 12" fill="none" stroke="#6A86AE" stroke-width="0.9"/><path d="M9 12 H15 M13 10 L15 12 L13 14" stroke="#E29A1E" stroke-width="1.2" fill="none"/></svg>
<svg class="a" style="left:652px;top:650px" width="16" height="16" viewBox="0 0 16 16"><rect x="1" y="1.5" width="12" height="9.5" rx="1" fill="#fff" stroke="#2F5FA8" stroke-width="1.6"/><path d="M3.5 4.8 H9 M3.5 7.3 H8" stroke="#2F5FA8" stroke-width="1.1"/><path d="M4.5 13.5 H9.5 M7 11 V13.5" stroke="#2F5FA8" stroke-width="1.6"/></svg>
<svg class="a" style="left:743px;top:650px" width="16" height="16" viewBox="0 0 16 16"><path d="M1.5 1.5 H9 L12.5 5 V14.5 H1.5 Z" fill="#FDF6E3" stroke="#B49459"/><rect x="4" y="9" width="5" height="5" fill="#3DBB4A"/><rect x="9" y="9" width="6" height="6" fill="#D04040"/></svg>
<svg class="a" style="left:822px;top:649px" width="16" height="16" viewBox="0 0 16 16"><path d="M1.5 9.5 V14.5 H14.5 V9.5" fill="none" stroke="#6A86AE" stroke-width="1.2"/><path d="M6 1 H10 V6 H12.5 L8 11 L3.5 6 H6 Z" fill="#6FBF5F" stroke="#3C8A3C" stroke-width="0.7"/></svg>
<svg class="a" style="left:912px;top:649px" width="16" height="16" viewBox="0 0 16 16"><rect x="1.5" y="5.5" width="7" height="10" fill="#fff" stroke="#9A9A9A"/><rect x="4.5" y="2.5" width="7" height="10" fill="#F8F1D8" stroke="#B8A060"/><ellipse cx="8" cy="2.5" rx="3.5" ry="2" fill="#F3C560" stroke="#B8862E" stroke-width="0.6"/></svg>
<svg class="a" style="left:978px;top:649px" width="16" height="16" viewBox="0 0 16 16"><rect x="1.5" y="3" width="8" height="12" fill="#F3D58C" stroke="#B8862E" stroke-width="0.7"/><ellipse cx="5.5" cy="3" rx="4" ry="2" fill="#F3C560" stroke="#B8862E" stroke-width="0.6"/><rect x="4" y="9" width="11" height="6" fill="#fff" stroke="#8895A8" stroke-width="0.6"/><text x="5" y="14" font-size="4.5" font-family="Liberation Sans" fill="#3A9A4A">GIT</text></svg>
<svg class="a" style="left:1251px;top:651px" width="12" height="12" viewBox="0 0 12 12"><rect x="1" y="1" width="10" height="10" rx="1" fill="#B0B0B0" stroke="#8A8A8A"/><rect x="3" y="3" width="6" height="6" fill="#C8C8C8"/></svg>
<svg class="a" style="left:1272px;top:650px" width="16" height="16" viewBox="0 0 16 16"><path d="M2.5 2.5 L11.5 11.5 M11.5 2.5 L2.5 11.5" stroke="#6E6E6E" stroke-width="3" stroke-linecap="round"/></svg>
<svg class="a" style="left:1294px;top:649px" width="16" height="16" viewBox="0 0 16 16"><path d="M2 1.5 L9 8.5 M9 1.5 L2 8.5" stroke="#CFCFCF" stroke-width="2.6" stroke-linecap="round"/><path d="M6 6 L14 14 M14 6 L6 14" stroke="#6E6E6E" stroke-width="2.8" stroke-linecap="round"/></svg>
<div class="a" style="left:1316px;top:648px;width:1px;height:18px;background:#8A8A8A"></div>
<svg class="a" style="left:1326px;top:650px" width="16" height="16" viewBox="0 0 16 16"><rect x="1.5" y="1.5" width="10" height="12" fill="#fff" stroke="#B49459"/><path d="M3.5 4.5 H9.5 M3.5 7 H9.5 M3.5 9.5 H7" stroke="#6A86AE"/><path d="M9 10 L14 15 M14 10 L9 15" stroke="#555" stroke-width="1.3"/></svg>
<svg class="a" style="left:1349px;top:650px" width="16" height="16" viewBox="0 0 16 16"><rect x="7.5" y="1.5" width="7" height="13" fill="#fff" stroke="#8895A8"/><path d="M9 4 H13 M9 6.5 H13 M9 9 H13 M9 11.5 H13" stroke="#6A86AE" stroke-width="0.8"/><path d="M2 8 V5.5 A2.5 2.5 0 0 1 7 5.5 V8" fill="none" stroke="#9A7A30" stroke-width="1.2"/><rect x="0.5" y="8" width="8" height="7" fill="#F2C24A" stroke="#A97B0C" stroke-width="0.7"/></svg>
<svg class="a" style="left:1372px;top:650px" width="16" height="16" viewBox="0 0 16 16"><rect x="1.5" y="1.5" width="11" height="12" fill="#fff" stroke="#B49459"/><path d="M3.5 4.5 H10 M3.5 7 H8" stroke="#6A86AE"/><path d="M14 6 V11 H8 M10 9 L8 11 L10 13" stroke="#E2A42A" stroke-width="1.5" fill="none"/></svg>
<div class="a" style="left:1391px;top:646px;width:46px;height:21px;background:#CDE3F8;border:1px solid #7EB4EA"></div>
<div class="a" style="left:1414px;top:647px;width:1px;height:19px;background:#7EB4EA"></div>
<svg class="a" style="left:1395px;top:649px" width="16" height="16" viewBox="0 0 16 16"><rect x="5.5" y="1.5" width="10" height="8" fill="#fff" stroke="#2F5FA8"/><rect x="1.5" y="5.5" width="9" height="7" fill="#EAF2FB" stroke="#2F5FA8"/><path d="M4 15 H9" stroke="#2F5FA8" stroke-width="1.5"/><path d="M7.5 4 H13.5 M7.5 6.5 H12" stroke="#2F5FA8" stroke-width="0.9"/></svg>
<svg class="a" style="left:1418px;top:649px" width="16" height="16" viewBox="0 0 16 16"><rect x="5.5" y="1.5" width="10" height="8" fill="#fff" stroke="#2F5FA8"/><rect x="1.5" y="5.5" width="9" height="7" fill="#EAF2FB" stroke="#2F5FA8"/><path d="M4 15 H9" stroke="#2F5FA8" stroke-width="1.5"/><path d="M9 3 L12 6.5 M12 3 L9 6.5" stroke="#E03030" stroke-width="1.3"/></svg>
<div class="a" style="left:1439px;top:648px;width:1px;height:18px;background:#8A8A8A"></div>
<svg class="a" style="left:1450px;top:650px" width="16" height="16" viewBox="0 0 16 16"><rect x="1.5" y="4.5" width="13" height="10" fill="#fff" stroke="#2F5FA8"/><rect x="1.5" y="4.5" width="13" height="2.5" fill="#5B9BD5"/><path d="M6 10 L10 6" stroke="#3D9A4A" stroke-width="1.5"/><circle cx="11.5" cy="4" r="3" fill="#3D9A4A"/></svg>
<svg class="a" style="left:1474px;top:650px" width="16" height="16" viewBox="0 0 16 16"><rect x="1.5" y="1.5" width="13" height="10" fill="#F0F0F0" stroke="#9A9A9A" stroke-width="1.4"/><path d="M4 5 H10 M4 8 H8" stroke="#9A9A9A"/><path d="M5 14 H11" stroke="#9A9A9A" stroke-width="2"/></svg>
<svg class="a" style="left:1493px;top:656px" width="8" height="6" viewBox="0 0 8 6"><path d="M0.5 1 H7.5 L4 5 Z" fill="#111"/></svg>
<svg class="a" style="left:1511px;top:650px" width="16" height="16" viewBox="0 0 16 16"><rect x="1.5" y="4.5" width="12" height="10" fill="#F4F8FC" stroke="#B49459"/><rect x="1.5" y="4.5" width="12" height="2.5" fill="#5B9BD5"/><circle cx="12.5" cy="3.5" r="3" fill="#FFF3C4" stroke="#C8A040" stroke-width="0.8"/><path d="M12.5 1.5 V5.5 M10.5 3.5 H14.5" stroke="#C8A040" stroke-width="0.8"/></svg>
<svg class="a" style="left:1531px;top:656px" width="8" height="6" viewBox="0 0 8 6"><path d="M0.5 1 H7.5 L4 5 Z" fill="#111"/></svg>
<svg class="a" style="left:1549px;top:651px" width="12" height="12" viewBox="0 0 12 12"><rect x="1.5" y="1.5" width="9" height="3" fill="#fff" stroke="#5A5A5A" stroke-width="1.1"/></svg><svg class="a" style="left:1572px;top:651px" width="13" height="13" viewBox="0 0 13 13"><rect x="1.5" y="1.5" width="9" height="9" fill="#fff" stroke="#5A5A5A" stroke-width="1.1"/><path d="M1.5 3.7 H10.5" stroke="#5A5A5A" stroke-width="1"/></svg>
<div class="t" style="left:409px;top:673px;">&lt;terminated&gt; MainClass2 [Java Application] C:\Program Files\Java\jre1.8.0_102\bin\javaw.exe (Jan 2, 2017, 4:33:54 PM)</div>
<div class="a" style="left:407px;top:687px;width:1188px;height:1px;background:#A0A0A0"></div>
<div class="code" style="left:409px;top:690px">CreateEmployeeTableOracle: main(): table created.</div>
<div class="a" style="left:1579px;top:689px;width:16px;height:123px;background:#F0F0F0"></div>
<div class="a" style="left:407px;top:812px;width:1188px;height:16px;background:#F0F0F0"></div>
<svg class="a" style="left:1582px;top:693px" width="9" height="8" viewBox="0 0 9 8"><path d="M1 6 L4.5 2.5 L8 6" fill="none" stroke="#B4B4B4" stroke-width="1.8"/></svg>
<svg class="a" style="left:1582px;top:799px" width="9" height="8" viewBox="0 0 9 8"><path d="M1 2 L4.5 5.5 L8 2" fill="none" stroke="#B4B4B4" stroke-width="1.8"/></svg>
<svg class="a" style="left:412px;top:816px" width="8" height="9" viewBox="0 0 8 9"><path d="M6 1 L2.5 4.5 L6 8" fill="none" stroke="#B4B4B4" stroke-width="1.8"/></svg>
<svg class="a" style="left:1567px;top:816px" width="8" height="9" viewBox="0 0 8 9"><path d="M2 1 L5.5 4.5 L2 8" fill="none" stroke="#B4B4B4" stroke-width="1.8"/></svg>
<div class="a" style="left:1017px;top:834px;width:1px;height:22px;background:#A8A8A8"></div>
<div class="a" style="left:1121px;top:834px;width:1px;height:22px;background:#A8A8A8"></div>
<div class="a" style="left:1219px;top:834px;width:1px;height:22px;background:#A8A8A8"></div>
<svg class="a" style="left:1314px;top:838px" width="4" height="19" viewBox="0 0 4 19"><g fill="#A79F8A"><rect x="1" y="1.0" width="2" height="2"/><rect x="1" y="4.5" width="2" height="2"/><rect x="1" y="8.0" width="2" height="2"/><rect x="1" y="11.5" width="2" height="2"/><rect x="1" y="15.0" width="2" height="2"/></g></svg>
<div class="t" style="left:1025px;top:838px;">Writable</div>
<div class="t" style="left:1129px;top:838px;">Smart Insert</div>
<div class="t" style="left:1227px;top:838px;">8 : 74</div>
<div class="a" style="left:0;top:860px;width:1600px;height:40px;background:#1F1F1F"></div>
<div class="a" style="left:48px;top:860px;width:344px;height:40px;background:#333"></div>
<div class="t" style="left:85px;top:872px;color:#A8A8A8;font-size:14.5px;line-height:16px">Ask me anything</div>
<svg class="a" style="left:16px;top:872px" width="16" height="16" viewBox="0 0 16 16"><g fill="#fff"><path d="M0 2.3 L6.8 1.3 V7.4 H0 Z"/><path d="M7.8 1.2 L16 0 V7.4 H7.8 Z"/><path d="M0 8.4 H6.8 V14.6 L0 13.6 Z"/><path d="M7.8 8.4 H16 V16 L7.8 14.8 Z"/></g></svg>
<svg class="a" style="left:57px;top:869px" width="22" height="22" viewBox="0 0 22 22"><circle cx="11" cy="11" r="9" fill="none" stroke="#fff" stroke-width="2.4"/></svg>
<svg class="a" style="left:364px;top:873px" width="14" height="16" viewBox="0 0 14 16"><rect x="4.5" y="0.5" width="5" height="9" rx="2.5" fill="none" stroke="#9A9A9A"/><path d="M2.5 7 Q2.5 12 7 12 Q11.5 12 11.5 7 M7 12 V15 M4.5 15 H9.5" fill="none" stroke="#9A9A9A"/></svg>
<svg class="a" style="left:405px;top:872px" width="21" height="17" viewBox="0 0 21 17"><rect x="4.5" y="1.5" width="12" height="14" fill="none" stroke="#fff" stroke-width="1.3"/><path d="M2.5 3 H0.8 V14 H2.5 M18.5 3 H20.2 V14 H18.5" fill="none" stroke="#fff" stroke-width="1.3"/></svg>
<svg class="a" style="left:457px;top:870px" width="21" height="21" viewBox="0 0 21 21"><path d="M10.5 1 C4 1 1 6 1 10.5 C1 17 6.5 20 11 20 C14 20 17 19 19 17.5 V13 C17 15 14.5 16 12 16 C8.5 16 6.5 14 6.5 11.5 H20 C20.5 5 16.5 1 10.5 1 Z M6.8 8.2 C7.3 5.8 9 4.5 11 4.5 C13 4.5 14.8 5.8 14.8 8.2 Z" fill="#1E88E5" fill-rule="evenodd"/></svg>
<svg class="a" style="left:505px;top:870px" width="22" height="20" viewBox="0 0 22 20"><path d="M0.5 2.5 H8 L10 4.5 H21.5 V18.5 H0.5 Z" fill="#F3C64B"/><rect x="0.5" y="7" width="21" height="11.5" fill="#FADE7A"/><path d="M7 13 H15 V19 H13 V15.5 H9 V19 H7 Z" fill="#2A8AE0"/></svg>
<svg class="a" style="left:554px;top:868px" width="22" height="23" viewBox="0 0 22 23"><path d="M6.5 5 V3.5 A4.5 3 0 0 1 15.5 3.5 V5" fill="none" stroke="#fff" stroke-width="1.3"/><path d="M1 5 H21 L20 22 H2 Z" fill="#fff"/><g fill="#1F1F1F"><rect x="7" y="9" width="3.5" height="3.5"/><rect x="11.5" y="9" width="3.5" height="3.5"/><rect x="7" y="13.5" width="3.5" height="3.5"/><rect x="11.5" y="13.5" width="3.5" height="3.5"/></g></svg>
<svg class="a" style="left:602px;top:869px" width="25" height="23" viewBox="0 0 25 23"><g fill="#fff"><path d="M6.5 0.5 L0.5 4.5 L6.5 8.5 L12.5 4.5 Z"/><path d="M18.5 0.5 L12.5 4.5 L18.5 8.5 L24.5 4.5 Z"/><path d="M0.5 12.5 L6.5 8.5 L12.5 12.5 L6.5 16.5 Z"/><path d="M24.5 12.5 L18.5 8.5 L12.5 12.5 L18.5 16.5 Z"/><path d="M6.5 18 L12.5 14 L18.5 18 L12.5 22 Z"/></g></svg>
<svg class="a" style="left:651px;top:868px" width="24" height="24" viewBox="0 0 24 24"><rect x="0" y="0" width="24" height="24" fill="#2A2F3A"/><text x="12" y="16" text-anchor="middle" font-size="17" font-family="Liberation Serif" font-weight="bold" fill="#fff">a</text><path d="M5 18.5 Q12 22 19 18" stroke="#fff" stroke-width="1.3" fill="none"/></svg>
<svg class="a" style="left:700px;top:868px" width="24" height="24" viewBox="0 0 24 24"><rect x="0" y="0" width="24" height="24" rx="2" fill="#5A9A45"/><circle cx="7.5" cy="12" r="4" fill="#fff" stroke="#1F1F1F" stroke-width="1"/><circle cx="16.5" cy="12" r="4" fill="#fff" stroke="#1F1F1F" stroke-width="1"/><circle cx="7.5" cy="12" r="1.5" fill="#1F1F1F"/><circle cx="16.5" cy="12" r="1.5" fill="#1F1F1F"/><path d="M3 7.5 Q12 4 21 7.5" stroke="#1F1F1F" stroke-width="1.2" fill="none"/></svg>
<svg class="a" style="left:750px;top:869px" width="22" height="22" viewBox="0 0 22 22"><circle cx="11" cy="11" r="10.5" fill="#DB4437"/><path d="M11 11 L20.1 16.25 A10.5 10.5 0 0 1 1.9 16.25 Z" fill="#0F9D58"/><path d="M11 11 L1.9 16.25 A10.5 10.5 0 0 1 1.9 5.75 L11 0.5 Z" fill="#0F9D58"/><path d="M11 11 L11 0.5 A10.5 10.5 0 0 1 20.1 16.25 Z" fill="#F4B400"/><path d="M11 11 L1.9 5.75 A10.5 10.5 0 0 1 20.1 5.75 Z" fill="#DB4437"/><circle cx="11" cy="11" r="5" fill="#fff"/><circle cx="11" cy="11" r="3.9" fill="#4285F4"/></svg>
<div class="a" style="left:786px;top:860px;width:48px;height:40px;background:#4B4B4B"></div>
<svg class="a" style="left:797px;top:867px" width="25" height="25" viewBox="0 0 32 32"><rect x="0" y="0" width="32" height="32" rx="2" fill="#5A3F98"/><rect x="0" y="20" width="32" height="12" fill="#4A2F88"/><rect x="14.3" y="1.5" width="3.4" height="5" fill="#E8E8E8" transform="rotate(0 16 16)"/><rect x="14.3" y="1.5" width="3.4" height="5" fill="#E8E8E8" transform="rotate(30 16 16)"/><rect x="14.3" y="1.5" width="3.4" height="5" fill="#E8E8E8" transform="rotate(60 16 16)"/><rect x="14.3" y="1.5" width="3.4" height="5" fill="#E8E8E8" transform="rotate(90 16 16)"/><rect x="14.3" y="1.5" width="3.4" height="5" fill="#E8E8E8" transform="rotate(120 16 16)"/><rect x="14.3" y="1.5" width="3.4" height="5" fill="#E8E8E8" transform="rotate(150 16 16)"/><rect x="14.3" y="1.5" width="3.4" height="5" fill="#E8E8E8" transform="rotate(180 16 16)"/><rect x="14.3" y="1.5" width="3.4" height="5" fill="#E8E8E8" transform="rotate(210 16 16)"/><rect x="14.3" y="1.5" width="3.4" height="5" fill="#E8E8E8" transform="rotate(240 16 16)"/><rect x="14.3" y="1.5" width="3.4" height="5" fill="#E8E8E8" transform="rotate(270 16 16)"/><rect x="14.3" y="1.5" width="3.4" height="5" fill="#E8E8E8" transform="rotate(300 16 16)"/><rect x="14.3" y="1.5" width="3.4" height="5" fill="#E8E8E8" transform="rotate(330 16 16)"/><circle cx="16" cy="16" r="11.5" fill="#E8E8E8"/><circle cx="16" cy="16" r="9" fill="#1A1420"/><text x="16" y="15" text-anchor="middle" font-size="8.5" font-family="Liberation Sans" font-weight="bold" fill="#F08A1C" textLength="30">Java EE</text><text x="16" y="23.5" text-anchor="middle" font-size="8.5" font-family="Liberation Sans" font-weight="bold" fill="#F08A1C">IDE</text></svg>
<svg class="a" style="left:848px;top:869px" width="23" height="23" viewBox="0 0 23 23"><rect x="1" y="1" width="16" height="19" rx="1" fill="#B9D3F0"/><path d="M1 6 H17 M1 11 H17 M1 16 H17 M9 1 V20" stroke="#7FA6D6" stroke-width="1"/><circle cx="16" cy="17" r="6" fill="#22B14C"/><path d="M14 14 L19.5 17 L14 20 Z" fill="#fff"/></svg>
<div class="a" style="left:741px;top:898px;width:40px;height:2px;background:#76B9ED"></div>
<div class="a" style="left:786px;top:898px;width:48px;height:2px;background:#76B9ED"></div>
<div class="a" style="left:839px;top:898px;width:40px;height:2px;background:#76B9ED"></div>
<svg class="a" style="left:1357px;top:866px" width="28" height="23" viewBox="0 0 28 23"><circle cx="9" cy="14" r="8.5" fill="#2A8AE0" stroke="#fff" stroke-width="1.2"/><rect x="8" y="0" width="20" height="20" fill="#E8751A"/><rect x="12" y="3" width="3" height="10" fill="#fff"/><rect x="12" y="14.5" width="3" height="3" fill="#fff"/><rect x="20" y="3" width="3" height="10" fill="#fff"/><rect x="20" y="14.5" width="3" height="3" fill="#fff"/></svg>
<svg class="a" style="left:1393px;top:876px" width="13" height="9" viewBox="0 0 13 9"><path d="M1 7 L6.5 1.5 L12 7" fill="none" stroke="#fff" stroke-width="1.4"/></svg>
<svg class="a" style="left:1415px;top:874px" width="18" height="13" viewBox="0 0 18 13"><rect x="5.5" y="3.5" width="10" height="8" fill="none" stroke="#fff"/><rect x="15.5" y="6" width="1.5" height="3" fill="#fff"/><rect x="7" y="5" width="7" height="5" fill="#fff"/><path d="M1 2 V6 M4 2 V6 M0 6 H5 V8 Q5 10 2.5 10" fill="none" stroke="#fff"/></svg>
<svg class="a" style="left:1439px;top:873px" width="17" height="15" viewBox="0 0 17 15"><rect x="3.5" y="1.5" width="12" height="9" fill="none" stroke="#fff"/><path d="M9.5 10.5 V14 M5 14 H14" stroke="#fff"/><rect x="0.5" y="0.5" width="4" height="3" fill="#1F1F1F" stroke="#fff" stroke-width="0.8"/></svg>
<svg class="a" style="left:1463px;top:873px" width="18" height="15" viewBox="0 0 18 15"><path d="M1.5 5 H4.5 L8.5 1.5 V13.5 L4.5 10 H1.5 Z" fill="none" stroke="#fff"/><path d="M10.5 5 Q12 7.5 10.5 10 M12.5 3 Q15 7.5 12.5 12 M14.5 1.5 Q18 7.5 14.5 13.5" fill="none" stroke="#fff" stroke-width="0.9" opacity="0.8"/></svg>
<div class="t" style="left:1494px;top:864px;color:#fff;font-size:12px">4:34 PM</div>
<div class="t" style="left:1492px;top:882px;color:#fff;font-size:12px">1/2/2017</div>
<svg class="a" style="left:1559px;top:869px" width="24" height="23" viewBox="0 0 24 23"><path d="M1 1 H19 V13 H8 L4 16 V13 H1 Z" fill="#fff"/><path d="M4 4.5 H16 M4 7.5 H16 M4 10.5 H12" stroke="#1F1F1F" stroke-width="1"/><circle cx="18" cy="17" r="5.5" fill="#1F1F1F" stroke="#777" stroke-width="1"/><text x="18" y="20.5" text-anchor="middle" font-size="9" font-family="Liberation Sans" font-weight="bold" fill="#fff">2</text></svg>
<div class="a" style="left:1596px;top:860px;width:1px;height:40px;background:#555"></div>
</body></html>
